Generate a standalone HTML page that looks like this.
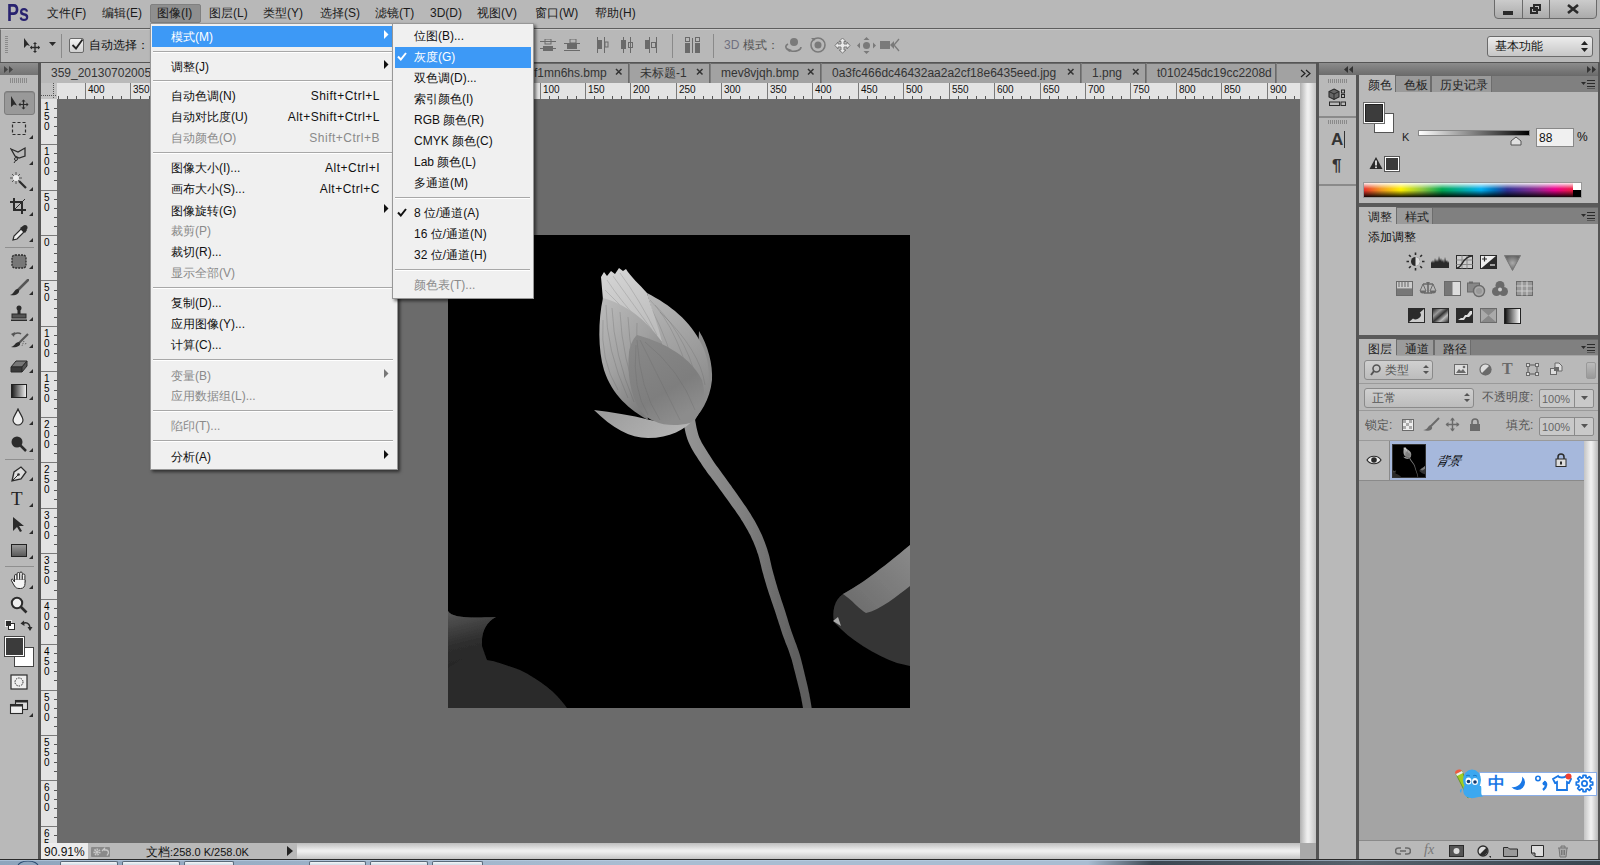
<!DOCTYPE html><html><head><meta charset="utf-8"><style>
*{margin:0;padding:0;box-sizing:border-box}
html,body{width:1600px;height:865px;overflow:hidden;background:#b9b9b9;font-family:"Liberation Sans",sans-serif;font-size:12px;color:#000}
div{position:absolute}
.t{position:absolute;white-space:nowrap;line-height:14px}
</style></head><body>
<div style="left:0px;top:0px;width:1600px;height:28px;background:#b8b8b8"></div>
<div style="left:0px;top:28px;width:1600px;height:1px;background:#5e5e5e"></div>
<div class="t" style="left:7px;top:1px;font-size:23px;font-weight:bold;color:#28226f;line-height:24px;transform:scaleX(0.78);transform-origin:0 0">Ps</div>
<div style="left:150px;top:4px;width:51px;height:19px;background:#8f8f8f;border-radius:2px;border:1px solid #808080"></div>
<div class="t" style="left:47px;top:6px;color:#1a1a1a">文件(F)</div>
<div class="t" style="left:102px;top:6px;color:#1a1a1a">编辑(E)</div>
<div class="t" style="left:157px;top:6px;color:#1a1a1a">图像(I)</div>
<div class="t" style="left:209px;top:6px;color:#1a1a1a">图层(L)</div>
<div class="t" style="left:263px;top:6px;color:#1a1a1a">类型(Y)</div>
<div class="t" style="left:320px;top:6px;color:#1a1a1a">选择(S)</div>
<div class="t" style="left:375px;top:6px;color:#1a1a1a">滤镜(T)</div>
<div class="t" style="left:430px;top:6px;color:#1a1a1a">3D(D)</div>
<div class="t" style="left:477px;top:6px;color:#1a1a1a">视图(V)</div>
<div class="t" style="left:535px;top:6px;color:#1a1a1a">窗口(W)</div>
<div class="t" style="left:595px;top:6px;color:#1a1a1a">帮助(H)</div>
<div style="left:1494px;top:-3px;width:103px;height:22px;background:linear-gradient(#cfcfcf,#ababab);border:1px solid #6a6a6a;border-radius:0 0 4px 4px"></div>
<div style="left:1522px;top:0px;width:1px;height:18px;background:#6a6a6a"></div>
<div style="left:1549px;top:0px;width:1px;height:18px;background:#6a6a6a"></div>
<div style="left:1503px;top:11px;width:10px;height:4px;background:#2a2a2a"></div>
<svg style="position:absolute;left:1530px;top:4px;" width="12" height="11" viewBox="0 0 12 11"><rect x="1" y="4" width="6" height="5" fill="none" stroke="#2a2a2a" stroke-width="2"/><rect x="4" y="1" width="6" height="5" fill="none" stroke="#2a2a2a" stroke-width="2"/></svg>
<svg style="position:absolute;left:1567px;top:4px;" width="12" height="10" viewBox="0 0 12 10"><path d="M1 1L11 9M11 1L1 9" stroke="#2a2a2a" stroke-width="2.6"/></svg>
<div style="left:0px;top:29px;width:1600px;height:33px;background:#b8b8b8;border-top:1px solid #cacaca;border-left:1px solid #707070;border-right:1px solid #707070"></div>
<div style="left:0px;top:62px;width:1600px;height:1px;background:#555"></div>
<div style="left:5px;top:36px;width:3px;height:1px;background:#8a8a8a"></div>
<div style="left:5px;top:38px;width:3px;height:1px;background:#8a8a8a"></div>
<div style="left:5px;top:40px;width:3px;height:1px;background:#8a8a8a"></div>
<div style="left:5px;top:42px;width:3px;height:1px;background:#8a8a8a"></div>
<div style="left:5px;top:44px;width:3px;height:1px;background:#8a8a8a"></div>
<div style="left:5px;top:46px;width:3px;height:1px;background:#8a8a8a"></div>
<div style="left:5px;top:48px;width:3px;height:1px;background:#8a8a8a"></div>
<div style="left:5px;top:50px;width:3px;height:1px;background:#8a8a8a"></div>
<div style="left:5px;top:52px;width:3px;height:1px;background:#8a8a8a"></div>
<svg style="position:absolute;left:23px;top:37px;" width="20" height="16" viewBox="0 0 20 16"><path d="M1 1L1 11L4 8L7 9Z" fill="#2a2a2a"/><path d="M12 6V15M7.5 10.5H16.5" stroke="#2a2a2a" stroke-width="1.3"/><path d="M10 7h4l-2-2zM10 14h4l-2 2zM9 8.5v4l-2-2zM15 8.5v4l2-2z" fill="#2a2a2a"/></svg>
<svg style="position:absolute;left:49px;top:42px;" width="8" height="5" viewBox="0 0 8 5"><path d="M0 0H7L3.5 4Z" fill="#2a2a2a"/></svg>
<div style="left:61px;top:34px;width:1px;height:24px;background:#8a8a8a"></div>
<div style="left:69px;top:38px;width:15px;height:15px;background:linear-gradient(#f4f4f4,#cfcfcf);border:1px solid #6a6a6a;border-radius:2px"></div>
<svg style="position:absolute;left:70px;top:38px;" width="14" height="13" viewBox="0 0 14 13"><path d="M2.5 7L6 10.5L12.5 1.5" fill="none" stroke="#222" stroke-width="1.8"/></svg>
<div class="t" style="left:89px;top:38px;color:#111">自动选择：</div>
<svg style="position:absolute;left:540px;top:39px;" width="17" height="12" viewBox="0 0 17 12"><rect x="0" y="2" width="16" height="1" fill="#6a6a6a"/><rect x="5" y="0" width="6" height="5" fill="none" stroke="#6a6a6a"/><rect x="0" y="9" width="16" height="1" fill="#6a6a6a"/><rect x="3" y="7" width="10" height="5" fill="#6a6a6a"/></svg>
<svg style="position:absolute;left:564px;top:39px;" width="17" height="12" viewBox="0 0 17 12"><rect x="6" y="0" width="6" height="4" fill="none" stroke="#6a6a6a"/><rect x="0" y="4" width="16" height="1" fill="#6a6a6a"/><rect x="3" y="5" width="10" height="5" fill="#6a6a6a"/><rect x="0" y="11" width="16" height="1" fill="#6a6a6a"/></svg>
<svg style="position:absolute;left:597px;top:37px;" width="13" height="16" viewBox="0 0 13 16"><rect x="0" y="0" width="1" height="16" fill="#6a6a6a"/><rect x="1" y="3" width="4" height="9" fill="#6a6a6a"/><rect x="7" y="0" width="1" height="16" fill="#6a6a6a"/><rect x="8" y="5" width="3" height="5" fill="none" stroke="#6a6a6a"/></svg>
<svg style="position:absolute;left:621px;top:37px;" width="13" height="16" viewBox="0 0 13 16"><rect x="2" y="0" width="1" height="16" fill="#6a6a6a"/><rect x="0" y="3" width="5" height="9" fill="#6a6a6a"/><rect x="9" y="0" width="1" height="16" fill="#6a6a6a"/><rect x="7.5" y="5.5" width="4" height="5" fill="none" stroke="#6a6a6a"/></svg>
<svg style="position:absolute;left:645px;top:37px;" width="13" height="16" viewBox="0 0 13 16"><rect x="0" y="3" width="4" height="9" fill="#6a6a6a"/><rect x="4" y="0" width="1" height="16" fill="#6a6a6a"/><rect x="6.5" y="5.5" width="4" height="5" fill="none" stroke="#6a6a6a"/><rect x="11" y="0" width="1" height="16" fill="#6a6a6a"/></svg>
<div style="left:672px;top:34px;width:1px;height:24px;background:#8a8a8a"></div>
<svg style="position:absolute;left:685px;top:37px;" width="16" height="16" viewBox="0 0 16 16"><rect x="0.5" y="0.5" width="4" height="4" fill="none" stroke="#6a6a6a"/><rect x="0" y="6" width="5" height="10" fill="#6a6a6a"/><rect x="7" y="1" width="1" height="15" fill="#6a6a6a"/><rect x="10.5" y="0.5" width="4" height="4" fill="none" stroke="#6a6a6a"/><rect x="10" y="6" width="5" height="10" fill="#6a6a6a"/></svg>
<div style="left:713px;top:34px;width:1px;height:24px;background:#8a8a8a"></div>
<div class="t" style="left:724px;top:38px;"><span style="color:#707080">3D</span> <span style="color:#555">模式：</span></div>
<svg style="position:absolute;left:784px;top:37px;" width="19" height="16" viewBox="0 0 19 16"><circle cx="10" cy="5" r="4" fill="#7a7a7a"/><path d="M4 7C0 9 2 13 7 14C12 15 17 13 17 10" fill="none" stroke="#7a7a7a" stroke-width="1.6"/><path d="M3 11l5 2-3 2z" fill="#7a7a7a"/></svg>
<svg style="position:absolute;left:809px;top:36px;" width="18" height="18" viewBox="0 0 18 18"><circle cx="9" cy="9" r="7" fill="none" stroke="#7a7a7a" stroke-width="1.6"/><circle cx="9" cy="9" r="3.5" fill="#7a7a7a"/><path d="M2 2l5 0-2 3z" fill="#7a7a7a"/></svg>
<svg style="position:absolute;left:834px;top:37px;" width="17" height="17" viewBox="0 0 17 17"><path d="M8.5 1L12 4.5H10V7H13V5L16 8.5L13 12V10H10V13H12L8.5 16L5 13H7V10H4V12L1 8.5L4 5V7H7V4.5H5Z" fill="#e8e8e8" stroke="#7a7a7a" stroke-width="1"/></svg>
<svg style="position:absolute;left:857px;top:37px;" width="19" height="17" viewBox="0 0 19 17"><circle cx="9.5" cy="8.5" r="3.5" fill="#7a7a7a"/><path d="M9.5 0l3 3h-6zM9.5 17l3-3h-6zM0 8.5l3-3v6zM19 8.5l-3-3v6z" fill="#7a7a7a"/></svg>
<svg style="position:absolute;left:880px;top:38px;" width="20" height="14" viewBox="0 0 20 14"><rect x="0" y="3" width="10" height="8" fill="#7a7a7a"/><path d="M10 7l4-4v8z" fill="#7a7a7a"/><path d="M19 1l-5 6 5 6" fill="none" stroke="#7a7a7a" stroke-width="1.3"/></svg>
<div style="left:1487px;top:36px;width:106px;height:21px;background:linear-gradient(#ececec,#c6c6c6);border:1px solid #6a6a6a;border-radius:3px"></div>
<div class="t" style="left:1495px;top:39px;color:#111">基本功能</div>
<svg style="position:absolute;left:1581px;top:41px;" width="7" height="11" viewBox="0 0 7 11"><path d="M0 4L3.5 0L7 4ZM0 7L3.5 11L7 7Z" fill="#222"/></svg>
<div style="left:0px;top:63px;width:38px;height:797px;background:#b9b9b9"></div>
<div style="left:0px;top:63px;width:38px;height:12px;background:linear-gradient(#8e8e8e,#737373)"></div>
<svg style="position:absolute;left:4px;top:66px;" width="10" height="7" viewBox="0 0 10 7"><path d="M0 0L4 3.5L0 7ZM5 0L9 3.5L5 7Z" fill="#444"/></svg>
<div style="left:10px;top:78px;width:1px;height:5px;background:#8a8a8a"></div>
<div style="left:12px;top:78px;width:1px;height:5px;background:#8a8a8a"></div>
<div style="left:14px;top:78px;width:1px;height:5px;background:#8a8a8a"></div>
<div style="left:16px;top:78px;width:1px;height:5px;background:#8a8a8a"></div>
<div style="left:18px;top:78px;width:1px;height:5px;background:#8a8a8a"></div>
<div style="left:20px;top:78px;width:1px;height:5px;background:#8a8a8a"></div>
<div style="left:22px;top:78px;width:1px;height:5px;background:#8a8a8a"></div>
<div style="left:24px;top:78px;width:1px;height:5px;background:#8a8a8a"></div>
<div style="left:26px;top:78px;width:1px;height:5px;background:#8a8a8a"></div>
<div style="left:38px;top:63px;width:3px;height:797px;background:#555"></div>
<div style="left:4px;top:91px;width:31px;height:24px;background:#999;border:1px solid #7c7c7c;border-radius:3px;box-shadow:inset 0 1px 0 #8a8a8a"></div>
<svg style="position:absolute;left:10px;top:95px;" width="20" height="16" viewBox="0 0 20 16"><path d="M1 1V12L4 9.5L7 10.5Z" fill="#2b2b2b"/><path d="M13.5 5V14M9 9.5H18" stroke="#2b2b2b" stroke-width="1.2"/><path d="M11.5 6.5h4l-2-2zM11.5 12.5h4l-2 2zM10.5 7.5v4l-2-2zM16.5 7.5v4l2-2z" fill="#2b2b2b"/></svg>
<svg style="position:absolute;left:11px;top:121px;" width="16" height="15" viewBox="0 0 16 15"><rect x="1.5" y="1.5" width="13" height="12" fill="none" stroke="#2b2b2b" stroke-width="1.2" stroke-dasharray="3 2"/></svg>
<svg style="position:absolute;left:29px;top:135px;" width="4" height="4" viewBox="0 0 4 4"><path d="M4 0V4H0Z" fill="#2b2b2b"/></svg>
<svg style="position:absolute;left:10px;top:146px;" width="18" height="18" viewBox="0 0 18 18"><path d="M1 3L8 6L15 2L15 10L9 12L5 10Z" fill="none" stroke="#2b2b2b" stroke-width="1.3"/><circle cx="6" cy="13" r="1.5" fill="none" stroke="#2b2b2b"/><path d="M6 14L4 17" stroke="#2b2b2b"/></svg>
<svg style="position:absolute;left:29px;top:161px;" width="4" height="4" viewBox="0 0 4 4"><path d="M4 0V4H0Z" fill="#2b2b2b"/></svg>
<svg style="position:absolute;left:9px;top:171px;" width="20" height="20" viewBox="0 0 20 20"><path d="M7 1V13M1 7H13M3 3L11 11M11 3L3 11" stroke="#555" stroke-width="1"/><circle cx="7" cy="7" r="3" fill="#eee"/><path d="M10 10L17 17" stroke="#2b2b2b" stroke-width="2.2"/></svg>
<svg style="position:absolute;left:29px;top:187px;" width="4" height="4" viewBox="0 0 4 4"><path d="M4 0V4H0Z" fill="#2b2b2b"/></svg>
<svg style="position:absolute;left:10px;top:198px;" width="17" height="17" viewBox="0 0 17 17"><path d="M4 0V12H16M0 4H12V16" fill="none" stroke="#2b2b2b" stroke-width="2"/><path d="M4 12L15 1" stroke="#2b2b2b" stroke-width="1"/></svg>
<svg style="position:absolute;left:29px;top:212px;" width="4" height="4" viewBox="0 0 4 4"><path d="M4 0V4H0Z" fill="#2b2b2b"/></svg>
<svg style="position:absolute;left:11px;top:224px;" width="17" height="18" viewBox="0 0 17 18"><path d="M2 16L3 12L10 5L13 8L6 15Z" fill="#eee" stroke="#2b2b2b" stroke-width="1.2"/><path d="M9 4L14 9L16 6L12 2Z" fill="#2b2b2b"/><circle cx="14" cy="3.5" r="2.5" fill="#2b2b2b"/></svg>
<svg style="position:absolute;left:29px;top:238px;" width="4" height="4" viewBox="0 0 4 4"><path d="M4 0V4H0Z" fill="#2b2b2b"/></svg>
<div style="left:5px;top:247px;width:29px;height:1px;background:#8f8f8f"></div>
<svg style="position:absolute;left:10px;top:253px;" width="18" height="17" viewBox="0 0 18 17"><rect x="2" y="2" width="14" height="13" rx="3" fill="#777" stroke="#2b2b2b" stroke-width="1.3" stroke-dasharray="2 1"/></svg>
<svg style="position:absolute;left:29px;top:265px;" width="4" height="4" viewBox="0 0 4 4"><path d="M4 0V4H0Z" fill="#2b2b2b"/></svg>
<svg style="position:absolute;left:9px;top:279px;" width="20" height="18" viewBox="0 0 20 18"><path d="M19 1L9 11" stroke="#555" stroke-width="2.5" stroke-linecap="round"/><path d="M9 10C5 10 5 15 1 16C6 17 11 15 10 11Z" fill="#2b2b2b"/></svg>
<svg style="position:absolute;left:29px;top:291px;" width="4" height="4" viewBox="0 0 4 4"><path d="M4 0V4H0Z" fill="#2b2b2b"/></svg>
<svg style="position:absolute;left:10px;top:305px;" width="18" height="17" viewBox="0 0 18 17"><circle cx="9" cy="3" r="2.5" fill="#2b2b2b"/><rect x="7.5" y="4" width="3" height="5" fill="#2b2b2b"/><rect x="2" y="9" width="14" height="4" fill="#555" stroke="#2b2b2b" stroke-width="1"/><rect x="1" y="14.5" width="16" height="1.5" fill="#2b2b2b"/></svg>
<svg style="position:absolute;left:29px;top:317px;" width="4" height="4" viewBox="0 0 4 4"><path d="M4 0V4H0Z" fill="#2b2b2b"/></svg>
<svg style="position:absolute;left:9px;top:331px;" width="20" height="18" viewBox="0 0 20 18"><path d="M4 4C7 1 11 2 12 3" fill="none" stroke="#555" stroke-width="1.5"/><path d="M2 3L6 1L5 6Z" fill="#555"/><path d="M19 3L10 12" stroke="#555" stroke-width="2.2"/><path d="M10 11C6 11 6 15 2 16C7 17 12 15 11 12Z" fill="#2b2b2b"/><path d="M15 10L13 15M17 12L16 14" stroke="#555" stroke-dasharray="1 1"/></svg>
<svg style="position:absolute;left:29px;top:344px;" width="4" height="4" viewBox="0 0 4 4"><path d="M4 0V4H0Z" fill="#2b2b2b"/></svg>
<svg style="position:absolute;left:10px;top:357px;" width="18" height="16" viewBox="0 0 18 16"><path d="M1 10L6 4H17L12 10Z" fill="#777" stroke="#2b2b2b"/><path d="M1 10H12V15H1Z" fill="#3a3a3a" stroke="#2b2b2b"/><path d="M12 10L17 4V9L12 15Z" fill="#555" stroke="#2b2b2b"/></svg>
<svg style="position:absolute;left:29px;top:369px;" width="4" height="4" viewBox="0 0 4 4"><path d="M4 0V4H0Z" fill="#2b2b2b"/></svg>
<div style="left:11px;top:384px;width:16px;height:14px;background:linear-gradient(90deg,#1e1e1e,#eeeeee);border:1px solid #222"></div>
<svg style="position:absolute;left:29px;top:396px;" width="4" height="4" viewBox="0 0 4 4"><path d="M4 0V4H0Z" fill="#2b2b2b"/></svg>
<svg style="position:absolute;left:11px;top:408px;" width="14" height="18" viewBox="0 0 14 18"><path d="M7 1C5 6 2 9 2 12C2 15 4.5 17 7 17C9.5 17 12 15 12 12C12 9 9 6 7 1Z" fill="#eee" stroke="#2b2b2b" stroke-width="1.2"/></svg>
<svg style="position:absolute;left:29px;top:421px;" width="4" height="4" viewBox="0 0 4 4"><path d="M4 0V4H0Z" fill="#2b2b2b"/></svg>
<svg style="position:absolute;left:10px;top:435px;" width="18" height="18" viewBox="0 0 18 18"><circle cx="7" cy="7" r="5.5" fill="#2b2b2b"/><path d="M10 10L16 16" stroke="#2b2b2b" stroke-width="2.5"/></svg>
<svg style="position:absolute;left:29px;top:448px;" width="4" height="4" viewBox="0 0 4 4"><path d="M4 0V4H0Z" fill="#2b2b2b"/></svg>
<div style="left:5px;top:459px;width:29px;height:1px;background:#8f8f8f"></div>
<svg style="position:absolute;left:10px;top:465px;" width="18" height="17" viewBox="0 0 18 17"><path d="M2 16L4 7L11 2L16 7L11 14Z" fill="#ddd" stroke="#2b2b2b" stroke-width="1.3"/><path d="M2 16L8 10" stroke="#2b2b2b"/><circle cx="8.5" cy="9.5" r="1.3" fill="#2b2b2b"/></svg>
<svg style="position:absolute;left:29px;top:477px;" width="4" height="4" viewBox="0 0 4 4"><path d="M4 0V4H0Z" fill="#2b2b2b"/></svg>
<div class="t" style="left:11px;top:489px;font-family:'Liberation Serif',serif;font-size:19px;line-height:19px;color:#222">T</div>
<svg style="position:absolute;left:29px;top:503px;" width="4" height="4" viewBox="0 0 4 4"><path d="M4 0V4H0Z" fill="#2b2b2b"/></svg>
<svg style="position:absolute;left:12px;top:516px;" width="14" height="17" viewBox="0 0 14 17"><path d="M1 1V15L5 11L8 16L10 15L7 10L12 10Z" fill="#2b2b2b"/></svg>
<svg style="position:absolute;left:29px;top:530px;" width="4" height="4" viewBox="0 0 4 4"><path d="M4 0V4H0Z" fill="#2b2b2b"/></svg>
<div style="left:11px;top:544px;width:16px;height:13px;background:linear-gradient(#9a9a9a,#5a5a5a);border:1px solid #222"></div>
<svg style="position:absolute;left:29px;top:555px;" width="4" height="4" viewBox="0 0 4 4"><path d="M4 0V4H0Z" fill="#2b2b2b"/></svg>
<div style="left:5px;top:566px;width:29px;height:1px;background:#8f8f8f"></div>
<svg style="position:absolute;left:10px;top:571px;" width="19" height="18" viewBox="0 0 19 18"><g fill="#f4f4f4" stroke="#2b2b2b" stroke-width="1"><rect x="4.5" y="3.5" width="2.6" height="9" rx="1.3"/><rect x="7.1" y="1.5" width="2.6" height="10" rx="1.3"/><rect x="9.7" y="1" width="2.6" height="10" rx="1.3"/><rect x="12.3" y="3" width="2.6" height="9" rx="1.3"/><path d="M3 8.5C2 7.5 0.8 8.5 1.5 9.8L4.5 15C5.5 16.6 7 17.5 9 17.5H10.5C13.5 17.5 15 15.5 15 12.5V9H4.5V11Z"/></g><path d="M5 9.5H14.5" stroke="#f4f4f4" stroke-width="1.5"/></svg>
<svg style="position:absolute;left:29px;top:585px;" width="4" height="4" viewBox="0 0 4 4"><path d="M4 0V4H0Z" fill="#2b2b2b"/></svg>
<svg style="position:absolute;left:10px;top:596px;" width="18" height="18" viewBox="0 0 18 18"><circle cx="7" cy="7" r="5.2" fill="#eee" stroke="#2b2b2b" stroke-width="2"/><path d="M11 11L16.5 16.5" stroke="#2b2b2b" stroke-width="2.6"/></svg>
<svg style="position:absolute;left:5px;top:620px;" width="10" height="11" viewBox="0 0 10 11"><rect x="0.5" y="0.5" width="6" height="6" fill="#2b2b2b" stroke="#fff" stroke-width="0.8"/><rect x="3.5" y="3.5" width="6" height="6" fill="#fff" stroke="#2b2b2b"/><rect x="1" y="1" width="5" height="5" fill="#2b2b2b"/></svg>
<svg style="position:absolute;left:20px;top:619px;" width="13" height="13" viewBox="0 0 13 13"><path d="M3 4.5C6 3 9 4 10 8" fill="none" stroke="#2b2b2b" stroke-width="1.4"/><path d="M0.5 4.5L4 1.5L4.5 7Z" fill="#2b2b2b"/><path d="M7.5 8H12.5L10 12Z" fill="#2b2b2b"/></svg>
<div style="left:14px;top:647px;width:20px;height:20px;background:#fff;border:1px solid #444"></div>
<div style="left:5px;top:637px;width:19px;height:19px;background:#3b3b3b;border:1px solid #fff;outline:1px solid #444"></div>
<svg style="position:absolute;left:10px;top:674px;" width="18" height="16" viewBox="0 0 18 16"><rect x="1" y="1" width="16" height="14" fill="#eee" stroke="#2b2b2b" stroke-width="1.2"/><circle cx="9" cy="8" r="4" fill="none" stroke="#2b2b2b" stroke-dasharray="1.5 1"/></svg>
<svg style="position:absolute;left:9px;top:699px;" width="20" height="18" viewBox="0 0 20 18"><rect x="6.5" y="1.5" width="12" height="9" fill="#ddd" stroke="#2b2b2b" stroke-width="1.1"/><rect x="6.5" y="1.5" width="12" height="2" fill="#2b2b2b"/><rect x="1.5" y="5.5" width="12" height="9" fill="#eee" stroke="#2b2b2b" stroke-width="1.1"/><rect x="1.5" y="5.5" width="12" height="2" fill="#2b2b2b"/></svg>
<svg style="position:absolute;left:29px;top:713px;" width="4" height="4" viewBox="0 0 4 4"><path d="M4 0V4H0Z" fill="#2b2b2b"/></svg>
<div style="left:41px;top:63px;width:1275px;height:20px;background:#7e7e7e"></div>
<div style="left:41px;top:63px;width:110px;height:20px;background:#b9b9b9"></div>
<div class="t" style="left:51px;top:66px;font-size:12px;color:#333">359_20130702005</div>
<div style="left:530px;top:63px;width:99px;height:20px;background:#a2a2a2;border-right:1px solid #6a6a6a;border-top:1px solid #6a6a6a"></div>
<div class="t" style="left:534px;top:66px;color:#333">f1mn6hs.bmp</div>
<svg style="position:absolute;left:615px;top:68px;" width="8" height="8" viewBox="0 0 8 8"><path d="M1 1L6.5 6.5M6.5 1L1 6.5" stroke="#333" stroke-width="1.5"/></svg>
<div style="left:630px;top:63px;width:80px;height:20px;background:#a2a2a2;border-right:1px solid #6a6a6a;border-top:1px solid #6a6a6a"></div>
<div class="t" style="left:640px;top:66px;color:#333">未标题-1</div>
<svg style="position:absolute;left:696px;top:68px;" width="8" height="8" viewBox="0 0 8 8"><path d="M1 1L6.5 6.5M6.5 1L1 6.5" stroke="#333" stroke-width="1.5"/></svg>
<div style="left:711px;top:63px;width:110px;height:20px;background:#a2a2a2;border-right:1px solid #6a6a6a;border-top:1px solid #6a6a6a"></div>
<div class="t" style="left:721px;top:66px;color:#333">mev8vjqh.bmp</div>
<svg style="position:absolute;left:807px;top:68px;" width="8" height="8" viewBox="0 0 8 8"><path d="M1 1L6.5 6.5M6.5 1L1 6.5" stroke="#333" stroke-width="1.5"/></svg>
<div style="left:822px;top:63px;width:259px;height:20px;background:#a2a2a2;border-right:1px solid #6a6a6a;border-top:1px solid #6a6a6a"></div>
<div class="t" style="left:832px;top:66px;color:#333">0a3fc466dc46432aa2a2cf18e6435eed.jpg</div>
<svg style="position:absolute;left:1067px;top:68px;" width="8" height="8" viewBox="0 0 8 8"><path d="M1 1L6.5 6.5M6.5 1L1 6.5" stroke="#333" stroke-width="1.5"/></svg>
<div style="left:1082px;top:63px;width:64px;height:20px;background:#a2a2a2;border-right:1px solid #6a6a6a;border-top:1px solid #6a6a6a"></div>
<div class="t" style="left:1092px;top:66px;color:#333">1.png</div>
<svg style="position:absolute;left:1132px;top:68px;" width="8" height="8" viewBox="0 0 8 8"><path d="M1 1L6.5 6.5M6.5 1L1 6.5" stroke="#333" stroke-width="1.5"/></svg>
<div style="left:1147px;top:63px;width:129px;height:20px;background:#a2a2a2;border-right:1px solid #6a6a6a;border-top:1px solid #6a6a6a"></div>
<div style="left:1147px;top:63px;width:129px;height:20px;overflow:hidden"><div class="t" style="left:10px;top:3px;color:#333">t010245dc19cc2208d</div></div>
<div style="left:1277px;top:63px;width:39px;height:20px;background:#a2a2a2;border-top:1px solid #6a6a6a"></div>
<svg style="position:absolute;left:1300px;top:69px;" width="12" height="9" viewBox="0 0 12 9"><path d="M1 1L5 4.5L1 8M6 1L10 4.5L6 8" fill="none" stroke="#222" stroke-width="1.2"/></svg>
<div style="left:41px;top:83px;width:1259px;height:16px;background:#e3e3e3"></div>
<div style="left:41px;top:99px;width:16px;height:744px;background:#e3e3e3"></div>
<div style="left:41px;top:83px;width:16px;height:16px;background:#c3c3c3"></div>
<svg style="position:absolute;left:41px;top:83px;" width="16" height="16" viewBox="0 0 16 16"><path d="M12.5 0V15M0 12.5H15" stroke="#555" stroke-dasharray="1 1"/></svg>
<svg style="position:absolute;left:57px;top:83px;" width="1243" height="16" viewBox="0 0 1243 16"><rect x="1" y="13" width="1" height="3" fill="#555"/><rect x="10" y="13" width="1" height="3" fill="#555"/><rect x="19" y="13" width="1" height="3" fill="#555"/><rect x="28" y="0" width="1" height="16" fill="#7a7a7a"/><rect x="37" y="13" width="1" height="3" fill="#555"/><rect x="46" y="13" width="1" height="3" fill="#555"/><rect x="55" y="13" width="1" height="3" fill="#555"/><rect x="64" y="13" width="1" height="3" fill="#555"/><rect x="73" y="0" width="1" height="16" fill="#7a7a7a"/><rect x="83" y="13" width="1" height="3" fill="#555"/><rect x="92" y="13" width="1" height="3" fill="#555"/><rect x="101" y="13" width="1" height="3" fill="#555"/><rect x="110" y="13" width="1" height="3" fill="#555"/><rect x="119" y="0" width="1" height="16" fill="#7a7a7a"/><rect x="128" y="13" width="1" height="3" fill="#555"/><rect x="137" y="13" width="1" height="3" fill="#555"/><rect x="146" y="13" width="1" height="3" fill="#555"/><rect x="155" y="13" width="1" height="3" fill="#555"/><rect x="164" y="0" width="1" height="16" fill="#7a7a7a"/><rect x="173" y="13" width="1" height="3" fill="#555"/><rect x="183" y="13" width="1" height="3" fill="#555"/><rect x="192" y="13" width="1" height="3" fill="#555"/><rect x="201" y="13" width="1" height="3" fill="#555"/><rect x="210" y="0" width="1" height="16" fill="#7a7a7a"/><rect x="219" y="13" width="1" height="3" fill="#555"/><rect x="228" y="13" width="1" height="3" fill="#555"/><rect x="237" y="13" width="1" height="3" fill="#555"/><rect x="246" y="13" width="1" height="3" fill="#555"/><rect x="255" y="0" width="1" height="16" fill="#7a7a7a"/><rect x="264" y="13" width="1" height="3" fill="#555"/><rect x="273" y="13" width="1" height="3" fill="#555"/><rect x="283" y="13" width="1" height="3" fill="#555"/><rect x="292" y="13" width="1" height="3" fill="#555"/><rect x="301" y="0" width="1" height="16" fill="#7a7a7a"/><rect x="310" y="13" width="1" height="3" fill="#555"/><rect x="319" y="13" width="1" height="3" fill="#555"/><rect x="328" y="13" width="1" height="3" fill="#555"/><rect x="337" y="13" width="1" height="3" fill="#555"/><rect x="346" y="0" width="1" height="16" fill="#7a7a7a"/><rect x="355" y="13" width="1" height="3" fill="#555"/><rect x="364" y="13" width="1" height="3" fill="#555"/><rect x="373" y="13" width="1" height="3" fill="#555"/><rect x="383" y="13" width="1" height="3" fill="#555"/><rect x="392" y="0" width="1" height="16" fill="#7a7a7a"/><rect x="401" y="13" width="1" height="3" fill="#555"/><rect x="410" y="13" width="1" height="3" fill="#555"/><rect x="419" y="13" width="1" height="3" fill="#555"/><rect x="428" y="13" width="1" height="3" fill="#555"/><rect x="437" y="0" width="1" height="16" fill="#7a7a7a"/><rect x="446" y="13" width="1" height="3" fill="#555"/><rect x="455" y="13" width="1" height="3" fill="#555"/><rect x="464" y="13" width="1" height="3" fill="#555"/><rect x="473" y="13" width="1" height="3" fill="#555"/><rect x="483" y="0" width="1" height="16" fill="#7a7a7a"/><rect x="492" y="13" width="1" height="3" fill="#555"/><rect x="501" y="13" width="1" height="3" fill="#555"/><rect x="510" y="13" width="1" height="3" fill="#555"/><rect x="519" y="13" width="1" height="3" fill="#555"/><rect x="528" y="0" width="1" height="16" fill="#7a7a7a"/><rect x="537" y="13" width="1" height="3" fill="#555"/><rect x="546" y="13" width="1" height="3" fill="#555"/><rect x="555" y="13" width="1" height="3" fill="#555"/><rect x="564" y="13" width="1" height="3" fill="#555"/><rect x="573" y="0" width="1" height="16" fill="#7a7a7a"/><rect x="583" y="13" width="1" height="3" fill="#555"/><rect x="592" y="13" width="1" height="3" fill="#555"/><rect x="601" y="13" width="1" height="3" fill="#555"/><rect x="610" y="13" width="1" height="3" fill="#555"/><rect x="619" y="0" width="1" height="16" fill="#7a7a7a"/><rect x="628" y="13" width="1" height="3" fill="#555"/><rect x="637" y="13" width="1" height="3" fill="#555"/><rect x="646" y="13" width="1" height="3" fill="#555"/><rect x="655" y="13" width="1" height="3" fill="#555"/><rect x="664" y="0" width="1" height="16" fill="#7a7a7a"/><rect x="673" y="13" width="1" height="3" fill="#555"/><rect x="683" y="13" width="1" height="3" fill="#555"/><rect x="692" y="13" width="1" height="3" fill="#555"/><rect x="701" y="13" width="1" height="3" fill="#555"/><rect x="710" y="0" width="1" height="16" fill="#7a7a7a"/><rect x="719" y="13" width="1" height="3" fill="#555"/><rect x="728" y="13" width="1" height="3" fill="#555"/><rect x="737" y="13" width="1" height="3" fill="#555"/><rect x="746" y="13" width="1" height="3" fill="#555"/><rect x="755" y="0" width="1" height="16" fill="#7a7a7a"/><rect x="764" y="13" width="1" height="3" fill="#555"/><rect x="773" y="13" width="1" height="3" fill="#555"/><rect x="783" y="13" width="1" height="3" fill="#555"/><rect x="792" y="13" width="1" height="3" fill="#555"/><rect x="801" y="0" width="1" height="16" fill="#7a7a7a"/><rect x="810" y="13" width="1" height="3" fill="#555"/><rect x="819" y="13" width="1" height="3" fill="#555"/><rect x="828" y="13" width="1" height="3" fill="#555"/><rect x="837" y="13" width="1" height="3" fill="#555"/><rect x="846" y="0" width="1" height="16" fill="#7a7a7a"/><rect x="855" y="13" width="1" height="3" fill="#555"/><rect x="864" y="13" width="1" height="3" fill="#555"/><rect x="873" y="13" width="1" height="3" fill="#555"/><rect x="883" y="13" width="1" height="3" fill="#555"/><rect x="892" y="0" width="1" height="16" fill="#7a7a7a"/><rect x="901" y="13" width="1" height="3" fill="#555"/><rect x="910" y="13" width="1" height="3" fill="#555"/><rect x="919" y="13" width="1" height="3" fill="#555"/><rect x="928" y="13" width="1" height="3" fill="#555"/><rect x="937" y="0" width="1" height="16" fill="#7a7a7a"/><rect x="946" y="13" width="1" height="3" fill="#555"/><rect x="955" y="13" width="1" height="3" fill="#555"/><rect x="964" y="13" width="1" height="3" fill="#555"/><rect x="973" y="13" width="1" height="3" fill="#555"/><rect x="983" y="0" width="1" height="16" fill="#7a7a7a"/><rect x="992" y="13" width="1" height="3" fill="#555"/><rect x="1001" y="13" width="1" height="3" fill="#555"/><rect x="1010" y="13" width="1" height="3" fill="#555"/><rect x="1019" y="13" width="1" height="3" fill="#555"/><rect x="1028" y="0" width="1" height="16" fill="#7a7a7a"/><rect x="1037" y="13" width="1" height="3" fill="#555"/><rect x="1046" y="13" width="1" height="3" fill="#555"/><rect x="1055" y="13" width="1" height="3" fill="#555"/><rect x="1064" y="13" width="1" height="3" fill="#555"/><rect x="1073" y="0" width="1" height="16" fill="#7a7a7a"/><rect x="1083" y="13" width="1" height="3" fill="#555"/><rect x="1092" y="13" width="1" height="3" fill="#555"/><rect x="1101" y="13" width="1" height="3" fill="#555"/><rect x="1110" y="13" width="1" height="3" fill="#555"/><rect x="1119" y="0" width="1" height="16" fill="#7a7a7a"/><rect x="1128" y="13" width="1" height="3" fill="#555"/><rect x="1137" y="13" width="1" height="3" fill="#555"/><rect x="1146" y="13" width="1" height="3" fill="#555"/><rect x="1155" y="13" width="1" height="3" fill="#555"/><rect x="1164" y="0" width="1" height="16" fill="#7a7a7a"/><rect x="1173" y="13" width="1" height="3" fill="#555"/><rect x="1183" y="13" width="1" height="3" fill="#555"/><rect x="1192" y="13" width="1" height="3" fill="#555"/><rect x="1201" y="13" width="1" height="3" fill="#555"/><rect x="1210" y="0" width="1" height="16" fill="#7a7a7a"/><rect x="1219" y="13" width="1" height="3" fill="#555"/><rect x="1228" y="13" width="1" height="3" fill="#555"/><rect x="1237" y="13" width="1" height="3" fill="#555"/></svg>
<div class="t" style="left:88px;top:85px;font-size:10px;line-height:10px;color:#111">400</div>
<div class="t" style="left:133px;top:85px;font-size:10px;line-height:10px;color:#111">350</div>
<div class="t" style="left:179px;top:85px;font-size:10px;line-height:10px;color:#111">300</div>
<div class="t" style="left:224px;top:85px;font-size:10px;line-height:10px;color:#111">250</div>
<div class="t" style="left:270px;top:85px;font-size:10px;line-height:10px;color:#111">200</div>
<div class="t" style="left:315px;top:85px;font-size:10px;line-height:10px;color:#111">150</div>
<div class="t" style="left:361px;top:85px;font-size:10px;line-height:10px;color:#111">100</div>
<div class="t" style="left:406px;top:85px;font-size:10px;line-height:10px;color:#111">50</div>
<div class="t" style="left:452px;top:85px;font-size:10px;line-height:10px;color:#111">0</div>
<div class="t" style="left:497px;top:85px;font-size:10px;line-height:10px;color:#111">50</div>
<div class="t" style="left:543px;top:85px;font-size:10px;line-height:10px;color:#111">100</div>
<div class="t" style="left:588px;top:85px;font-size:10px;line-height:10px;color:#111">150</div>
<div class="t" style="left:633px;top:85px;font-size:10px;line-height:10px;color:#111">200</div>
<div class="t" style="left:679px;top:85px;font-size:10px;line-height:10px;color:#111">250</div>
<div class="t" style="left:724px;top:85px;font-size:10px;line-height:10px;color:#111">300</div>
<div class="t" style="left:770px;top:85px;font-size:10px;line-height:10px;color:#111">350</div>
<div class="t" style="left:815px;top:85px;font-size:10px;line-height:10px;color:#111">400</div>
<div class="t" style="left:861px;top:85px;font-size:10px;line-height:10px;color:#111">450</div>
<div class="t" style="left:906px;top:85px;font-size:10px;line-height:10px;color:#111">500</div>
<div class="t" style="left:952px;top:85px;font-size:10px;line-height:10px;color:#111">550</div>
<div class="t" style="left:997px;top:85px;font-size:10px;line-height:10px;color:#111">600</div>
<div class="t" style="left:1043px;top:85px;font-size:10px;line-height:10px;color:#111">650</div>
<div class="t" style="left:1088px;top:85px;font-size:10px;line-height:10px;color:#111">700</div>
<div class="t" style="left:1133px;top:85px;font-size:10px;line-height:10px;color:#111">750</div>
<div class="t" style="left:1179px;top:85px;font-size:10px;line-height:10px;color:#111">800</div>
<div class="t" style="left:1224px;top:85px;font-size:10px;line-height:10px;color:#111">850</div>
<div class="t" style="left:1270px;top:85px;font-size:10px;line-height:10px;color:#111">900</div>
<svg style="position:absolute;left:41px;top:99px;" width="16" height="744" viewBox="0 0 16 744"><rect x="13" y="9" width="3" height="1" fill="#555"/><rect x="13" y="18" width="3" height="1" fill="#555"/><rect x="13" y="27" width="3" height="1" fill="#555"/><rect x="13" y="36" width="3" height="1" fill="#555"/><rect x="0" y="45" width="16" height="1" fill="#7a7a7a"/><rect x="13" y="54" width="3" height="1" fill="#555"/><rect x="13" y="63" width="3" height="1" fill="#555"/><rect x="13" y="72" width="3" height="1" fill="#555"/><rect x="13" y="81" width="3" height="1" fill="#555"/><rect x="0" y="91" width="16" height="1" fill="#7a7a7a"/><rect x="13" y="100" width="3" height="1" fill="#555"/><rect x="13" y="109" width="3" height="1" fill="#555"/><rect x="13" y="118" width="3" height="1" fill="#555"/><rect x="13" y="127" width="3" height="1" fill="#555"/><rect x="0" y="136" width="16" height="1" fill="#7a7a7a"/><rect x="13" y="145" width="3" height="1" fill="#555"/><rect x="13" y="154" width="3" height="1" fill="#555"/><rect x="13" y="163" width="3" height="1" fill="#555"/><rect x="13" y="172" width="3" height="1" fill="#555"/><rect x="0" y="181" width="16" height="1" fill="#7a7a7a"/><rect x="13" y="191" width="3" height="1" fill="#555"/><rect x="13" y="200" width="3" height="1" fill="#555"/><rect x="13" y="209" width="3" height="1" fill="#555"/><rect x="13" y="218" width="3" height="1" fill="#555"/><rect x="0" y="227" width="16" height="1" fill="#7a7a7a"/><rect x="13" y="236" width="3" height="1" fill="#555"/><rect x="13" y="245" width="3" height="1" fill="#555"/><rect x="13" y="254" width="3" height="1" fill="#555"/><rect x="13" y="263" width="3" height="1" fill="#555"/><rect x="0" y="272" width="16" height="1" fill="#7a7a7a"/><rect x="13" y="281" width="3" height="1" fill="#555"/><rect x="13" y="291" width="3" height="1" fill="#555"/><rect x="13" y="300" width="3" height="1" fill="#555"/><rect x="13" y="309" width="3" height="1" fill="#555"/><rect x="0" y="318" width="16" height="1" fill="#7a7a7a"/><rect x="13" y="327" width="3" height="1" fill="#555"/><rect x="13" y="336" width="3" height="1" fill="#555"/><rect x="13" y="345" width="3" height="1" fill="#555"/><rect x="13" y="354" width="3" height="1" fill="#555"/><rect x="0" y="363" width="16" height="1" fill="#7a7a7a"/><rect x="13" y="372" width="3" height="1" fill="#555"/><rect x="13" y="381" width="3" height="1" fill="#555"/><rect x="13" y="391" width="3" height="1" fill="#555"/><rect x="13" y="400" width="3" height="1" fill="#555"/><rect x="0" y="409" width="16" height="1" fill="#7a7a7a"/><rect x="13" y="418" width="3" height="1" fill="#555"/><rect x="13" y="427" width="3" height="1" fill="#555"/><rect x="13" y="436" width="3" height="1" fill="#555"/><rect x="13" y="445" width="3" height="1" fill="#555"/><rect x="0" y="454" width="16" height="1" fill="#7a7a7a"/><rect x="13" y="463" width="3" height="1" fill="#555"/><rect x="13" y="472" width="3" height="1" fill="#555"/><rect x="13" y="481" width="3" height="1" fill="#555"/><rect x="13" y="491" width="3" height="1" fill="#555"/><rect x="0" y="500" width="16" height="1" fill="#7a7a7a"/><rect x="13" y="509" width="3" height="1" fill="#555"/><rect x="13" y="518" width="3" height="1" fill="#555"/><rect x="13" y="527" width="3" height="1" fill="#555"/><rect x="13" y="536" width="3" height="1" fill="#555"/><rect x="0" y="545" width="16" height="1" fill="#7a7a7a"/><rect x="13" y="554" width="3" height="1" fill="#555"/><rect x="13" y="563" width="3" height="1" fill="#555"/><rect x="13" y="572" width="3" height="1" fill="#555"/><rect x="13" y="581" width="3" height="1" fill="#555"/><rect x="0" y="591" width="16" height="1" fill="#7a7a7a"/><rect x="13" y="600" width="3" height="1" fill="#555"/><rect x="13" y="609" width="3" height="1" fill="#555"/><rect x="13" y="618" width="3" height="1" fill="#555"/><rect x="13" y="627" width="3" height="1" fill="#555"/><rect x="0" y="636" width="16" height="1" fill="#7a7a7a"/><rect x="13" y="645" width="3" height="1" fill="#555"/><rect x="13" y="654" width="3" height="1" fill="#555"/><rect x="13" y="663" width="3" height="1" fill="#555"/><rect x="13" y="672" width="3" height="1" fill="#555"/><rect x="0" y="681" width="16" height="1" fill="#7a7a7a"/><rect x="13" y="691" width="3" height="1" fill="#555"/><rect x="13" y="700" width="3" height="1" fill="#555"/><rect x="13" y="709" width="3" height="1" fill="#555"/><rect x="13" y="718" width="3" height="1" fill="#555"/><rect x="0" y="727" width="16" height="1" fill="#7a7a7a"/><rect x="13" y="736" width="3" height="1" fill="#555"/></svg>
<div style="left:44px;top:102px;width:8px;height:30px"><div class="t" style="left:0;top:0px;font-size:10px;line-height:10px">1</div><div class="t" style="left:0;top:10px;font-size:10px;line-height:10px">5</div><div class="t" style="left:0;top:20px;font-size:10px;line-height:10px">0</div></div>
<div style="left:44px;top:147px;width:8px;height:30px"><div class="t" style="left:0;top:0px;font-size:10px;line-height:10px">1</div><div class="t" style="left:0;top:10px;font-size:10px;line-height:10px">0</div><div class="t" style="left:0;top:20px;font-size:10px;line-height:10px">0</div></div>
<div style="left:44px;top:193px;width:8px;height:30px"><div class="t" style="left:0;top:0px;font-size:10px;line-height:10px">5</div><div class="t" style="left:0;top:10px;font-size:10px;line-height:10px">0</div></div>
<div style="left:44px;top:238px;width:8px;height:30px"><div class="t" style="left:0;top:0px;font-size:10px;line-height:10px">0</div></div>
<div style="left:44px;top:283px;width:8px;height:30px"><div class="t" style="left:0;top:0px;font-size:10px;line-height:10px">5</div><div class="t" style="left:0;top:10px;font-size:10px;line-height:10px">0</div></div>
<div style="left:44px;top:329px;width:8px;height:30px"><div class="t" style="left:0;top:0px;font-size:10px;line-height:10px">1</div><div class="t" style="left:0;top:10px;font-size:10px;line-height:10px">0</div><div class="t" style="left:0;top:20px;font-size:10px;line-height:10px">0</div></div>
<div style="left:44px;top:374px;width:8px;height:30px"><div class="t" style="left:0;top:0px;font-size:10px;line-height:10px">1</div><div class="t" style="left:0;top:10px;font-size:10px;line-height:10px">5</div><div class="t" style="left:0;top:20px;font-size:10px;line-height:10px">0</div></div>
<div style="left:44px;top:420px;width:8px;height:30px"><div class="t" style="left:0;top:0px;font-size:10px;line-height:10px">2</div><div class="t" style="left:0;top:10px;font-size:10px;line-height:10px">0</div><div class="t" style="left:0;top:20px;font-size:10px;line-height:10px">0</div></div>
<div style="left:44px;top:465px;width:8px;height:30px"><div class="t" style="left:0;top:0px;font-size:10px;line-height:10px">2</div><div class="t" style="left:0;top:10px;font-size:10px;line-height:10px">5</div><div class="t" style="left:0;top:20px;font-size:10px;line-height:10px">0</div></div>
<div style="left:44px;top:511px;width:8px;height:30px"><div class="t" style="left:0;top:0px;font-size:10px;line-height:10px">3</div><div class="t" style="left:0;top:10px;font-size:10px;line-height:10px">0</div><div class="t" style="left:0;top:20px;font-size:10px;line-height:10px">0</div></div>
<div style="left:44px;top:556px;width:8px;height:30px"><div class="t" style="left:0;top:0px;font-size:10px;line-height:10px">3</div><div class="t" style="left:0;top:10px;font-size:10px;line-height:10px">5</div><div class="t" style="left:0;top:20px;font-size:10px;line-height:10px">0</div></div>
<div style="left:44px;top:602px;width:8px;height:30px"><div class="t" style="left:0;top:0px;font-size:10px;line-height:10px">4</div><div class="t" style="left:0;top:10px;font-size:10px;line-height:10px">0</div><div class="t" style="left:0;top:20px;font-size:10px;line-height:10px">0</div></div>
<div style="left:44px;top:647px;width:8px;height:30px"><div class="t" style="left:0;top:0px;font-size:10px;line-height:10px">4</div><div class="t" style="left:0;top:10px;font-size:10px;line-height:10px">5</div><div class="t" style="left:0;top:20px;font-size:10px;line-height:10px">0</div></div>
<div style="left:44px;top:693px;width:8px;height:30px"><div class="t" style="left:0;top:0px;font-size:10px;line-height:10px">5</div><div class="t" style="left:0;top:10px;font-size:10px;line-height:10px">0</div><div class="t" style="left:0;top:20px;font-size:10px;line-height:10px">0</div></div>
<div style="left:44px;top:738px;width:8px;height:30px"><div class="t" style="left:0;top:0px;font-size:10px;line-height:10px">5</div><div class="t" style="left:0;top:10px;font-size:10px;line-height:10px">5</div><div class="t" style="left:0;top:20px;font-size:10px;line-height:10px">0</div></div>
<div style="left:44px;top:783px;width:8px;height:30px"><div class="t" style="left:0;top:0px;font-size:10px;line-height:10px">6</div><div class="t" style="left:0;top:10px;font-size:10px;line-height:10px">0</div><div class="t" style="left:0;top:20px;font-size:10px;line-height:10px">0</div></div>
<div style="left:44px;top:829px;width:8px;height:30px"><div class="t" style="left:0;top:0px;font-size:10px;line-height:10px">6</div><div class="t" style="left:0;top:10px;font-size:10px;line-height:10px">5</div><div class="t" style="left:0;top:20px;font-size:10px;line-height:10px">0</div></div>
<div style="left:57px;top:99px;width:1243px;height:744px;background:#6b6b6b"></div>
<div style="left:1300px;top:83px;width:16px;height:760px;background:linear-gradient(90deg,#b0b0b0,#eeeeee 45%,#eeeeee 55%,#c4c4c4)"></div>
<div style="left:41px;top:843px;width:1275px;height:16px;background:#b9b9b9"></div>
<div style="left:41px;top:843px;width:47px;height:16px;background:#ececec"></div>
<div class="t" style="left:44px;top:845px;font-size:12px;color:#111">90.91%</div>
<div style="left:91px;top:847px;width:19px;height:10px;background:#8a8a8a;border-radius:1px"></div>
<svg style="position:absolute;left:92px;top:847px;" width="18" height="10" viewBox="0 0 18 10"><circle cx="5" cy="5" r="2.6" fill="none" stroke="#c8c8c8" stroke-width="2" stroke-dasharray="1.4 0.9"/><circle cx="5" cy="5" r="1.6" fill="#c8c8c8"/><path d="M10 4L12.5 1.5V3H14C15.5 3 16.5 4.5 16.5 6L15 8.5M13 5.5" fill="none" stroke="#c8c8c8" stroke-width="1.3"/></svg>
<div class="t" style="left:146px;top:845px;color:#111">文档<span style="font-size:11px">:258.0 K/258.0K</span></div>
<svg style="position:absolute;left:287px;top:846px;" width="7" height="10" viewBox="0 0 7 10"><path d="M0 0L6 5L0 10Z" fill="#222"/></svg>
<div style="left:297px;top:843px;width:1003px;height:16px;background:linear-gradient(#bdbdbd,#eeeeee 45%,#eeeeee 55%,#c4c4c4)"></div>
<div style="left:1300px;top:843px;width:16px;height:16px;background:#a9a9a9"></div>
<div style="left:1316px;top:63px;width:3px;height:797px;background:#555"></div>
<div style="left:1319px;top:63px;width:281px;height:12px;background:linear-gradient(#8c8c8c,#6c6c6c)"></div>
<svg style="position:absolute;left:1344px;top:66px;" width="10" height="7" viewBox="0 0 10 7"><path d="M4 0L0 3.5L4 7ZM9 0L5 3.5L9 7Z" fill="#333"/></svg>
<svg style="position:absolute;left:1587px;top:66px;" width="10" height="7" viewBox="0 0 10 7"><path d="M0 0L4 3.5L0 7ZM5 0L9 3.5L5 7Z" fill="#333"/></svg>
<div style="left:1319px;top:75px;width:37px;height:785px;background:#b9b9b9"></div>
<div style="left:1356px;top:75px;width:3px;height:785px;background:#555"></div>
<div style="left:1598px;top:63px;width:2px;height:797px;background:#555"></div>
<div style="left:1359px;top:75px;width:239px;height:785px;background:#a4a4a4"></div>
<svg style="position:absolute;left:448px;top:235px" width="462" height="473" viewBox="448 235 462 473" preserveAspectRatio="none">
<defs>
<filter id="blp462" x="-5%" y="-5%" width="110%" height="110%"><feGaussianBlur stdDeviation="0.6"/></filter>
<linearGradient id="stemp462" x1="0" y1="0" x2="1" y2="0.15"><stop offset="0" stop-color="#959595"/><stop offset="0.5" stop-color="#808080"/><stop offset="1" stop-color="#5e5e5e"/></linearGradient>
<linearGradient id="lpp462" x1="0" y1="0" x2="0.6" y2="1"><stop offset="0" stop-color="#bcbcbc"/><stop offset="0.55" stop-color="#a0a0a0"/><stop offset="1" stop-color="#7a7a7a"/></linearGradient>
<linearGradient id="tpp462" x1="0" y1="0" x2="0.4" y2="1"><stop offset="0" stop-color="#d6d6d6"/><stop offset="1" stop-color="#bdbdbd"/></linearGradient>
<linearGradient id="rpp462" x1="0" y1="0" x2="0.3" y2="1"><stop offset="0" stop-color="#b8b8b8"/><stop offset="1" stop-color="#8a8a8a"/></linearGradient>
<linearGradient id="fpp462" x1="0" y1="0" x2="0.5" y2="1"><stop offset="0" stop-color="#8a8a8a"/><stop offset="0.7" stop-color="#7e7e7e"/><stop offset="1" stop-color="#8c8c8c"/></linearGradient>
<linearGradient id="bpp462" x1="0" y1="0" x2="1" y2="0.3"><stop offset="0" stop-color="#9a9a9a"/><stop offset="1" stop-color="#b4b4b4"/></linearGradient>
<linearGradient id="rlp462" x1="1" y1="0" x2="0" y2="1"><stop offset="0" stop-color="#8a8a8a"/><stop offset="1" stop-color="#6a6a6a"/></linearGradient>
</defs>
<rect x="448" y="235" width="462" height="473" fill="#000"/>
<g filter="url(#blp462)">
<linearGradient id="ulp462" x1="0" y1="0" x2="0.2" y2="1"><stop offset="0" stop-color="#585858"/><stop offset="0.6" stop-color="#2e2e2e"/><stop offset="1" stop-color="#262626"/></linearGradient><path d="M448 611 C452 618 470 618 496 617 C486 622 481 632 482 646 C484 652 486 657 487 660 C500 662 510 667 520 670 C540 680 556 692 567 708 L448 708Z" fill="#2a2a2a"/><path d="M448 611 C452 618 470 618 496 617 C486 622 481 632 482 646 C470 655 458 662 448 668Z" fill="url(#ulp462)"/>
<path d="M910 545 C880 570 860 585 843 594 C834 600 832 612 834 622 C850 640 875 655 897 663 L910 666Z" fill="#353535"/>
<path d="M910 545 C880 570 860 585 843 594 C852 600 860 610 866 613 C880 610 897 596 910 586Z" fill="url(#rlp462)"/>
<path d="M833 621 L841 626 L838 617Z" fill="#aaa"/>
<path d="M683.1 421.3 L683.5 422.7 L683.8 424.6 L684.3 427.1 L684.9 429.8 L685.6 432.9 L686.4 436.0 L687.4 439.2 L688.6 442.3 L690.0 445.3 L691.5 448.3 L693.2 451.2 L695.0 454.2 L696.9 457.1 L698.7 459.9 L700.5 462.6 L702.2 465.2 L703.9 467.7 L705.6 470.1 L707.2 472.4 L708.9 474.7 L710.6 476.8 L712.2 479.0 L713.8 481.1 L715.4 483.3 L717.1 485.6 L718.7 487.8 L720.3 490.0 L722.0 492.2 L723.6 494.4 L725.2 496.7 L726.9 498.9 L728.5 501.2 L730.1 503.5 L731.8 505.9 L733.5 508.2 L735.2 510.6 L736.8 513.0 L738.4 515.3 L740.0 517.6 L741.4 519.9 L742.8 522.1 L744.1 524.3 L745.4 526.5 L746.7 528.7 L747.9 530.8 L749.0 533.0 L750.2 535.1 L751.2 537.3 L752.2 539.4 L753.2 541.6 L754.1 543.7 L755.0 545.9 L755.8 548.1 L756.6 550.2 L757.3 552.4 L758.1 554.6 L758.7 556.7 L759.3 558.8 L759.8 560.9 L760.3 563.1 L760.9 565.3 L761.4 567.6 L762.0 569.9 L762.6 572.3 L763.3 574.6 L763.9 577.0 L764.6 579.3 L765.3 581.7 L766.0 584.1 L766.7 586.5 L767.5 589.0 L768.3 591.5 L769.1 594.0 L770.0 596.6 L770.9 599.3 L771.8 601.9 L772.7 604.5 L773.6 607.2 L774.5 609.8 L775.4 612.5 L776.3 615.2 L777.1 617.9 L778.0 620.6 L778.9 623.4 L779.8 626.1 L780.7 628.9 L781.6 631.7 L782.5 634.5 L783.5 637.3 L784.6 640.1 L785.6 642.9 L786.7 645.6 L787.8 648.3 L788.8 651.0 L789.7 653.7 L790.6 656.4 L791.5 659.1 L792.3 662.0 L793.1 665.0 L793.8 667.9 L794.6 670.9 L795.3 673.7 L796.0 676.5 L796.6 679.1 L797.3 681.5 L797.8 683.7 L798.4 685.9 L798.9 687.9 L799.4 689.9 L799.8 691.8 L800.3 693.8 L800.7 695.9 L801.2 698.1 L801.6 700.4 L802.1 702.9 L802.5 705.3 L802.9 707.6 L803.3 709.6 L803.6 711.4 L803.8 712.7 L812.2 711.3 L812.0 710.0 L811.7 708.2 L811.4 706.2 L811.0 703.8 L810.6 701.4 L810.2 698.9 L809.7 696.4 L809.3 694.1 L808.8 692.0 L808.4 689.9 L808.0 687.9 L807.5 685.8 L807.0 683.8 L806.5 681.6 L805.9 679.3 L805.4 676.9 L804.7 674.3 L804.1 671.6 L803.4 668.7 L802.7 665.7 L801.9 662.7 L801.1 659.6 L800.3 656.6 L799.4 653.6 L798.5 650.7 L797.5 647.9 L796.5 645.0 L795.4 642.3 L794.4 639.5 L793.4 636.8 L792.4 634.1 L791.5 631.5 L790.6 628.8 L789.7 626.0 L788.8 623.3 L788.0 620.5 L787.2 617.8 L786.3 615.0 L785.5 612.2 L784.6 609.5 L783.7 606.8 L782.8 604.1 L781.9 601.4 L781.0 598.7 L780.2 596.1 L779.3 593.5 L778.5 591.0 L777.7 588.5 L777.0 586.1 L776.3 583.7 L775.6 581.3 L774.9 578.9 L774.3 576.6 L773.6 574.3 L773.0 572.0 L772.4 569.7 L771.8 567.5 L771.3 565.3 L770.8 563.0 L770.3 560.8 L769.8 558.5 L769.3 556.2 L768.6 553.8 L767.9 551.4 L767.2 549.1 L766.4 546.8 L765.6 544.4 L764.7 542.1 L763.8 539.8 L762.9 537.4 L761.9 535.1 L760.8 532.7 L759.7 530.4 L758.5 528.1 L757.3 525.8 L756.1 523.4 L754.8 521.1 L753.4 518.8 L752.0 516.5 L750.6 514.1 L749.1 511.7 L747.5 509.3 L745.9 506.8 L744.2 504.4 L742.5 501.9 L740.8 499.5 L739.2 497.2 L737.5 494.8 L735.9 492.5 L734.3 490.2 L732.6 487.9 L731.0 485.6 L729.4 483.4 L727.8 481.2 L726.2 478.9 L724.6 476.7 L722.9 474.4 L721.3 472.2 L719.7 470.0 L718.1 467.8 L716.5 465.7 L714.9 463.5 L713.4 461.2 L711.8 458.8 L710.2 456.3 L708.4 453.6 L706.7 450.8 L705.0 448.1 L703.3 445.3 L701.8 442.7 L700.5 440.1 L699.4 437.7 L698.5 435.3 L697.8 432.8 L697.1 430.1 L696.5 427.4 L696.0 424.8 L695.6 422.4 L695.2 420.4 L694.9 418.7Z" fill="url(#stemp462)"/>
<path d="M594 410 C612 412 630 415 650 420 C668 424 685 420 695 418 C685 430 670 438 648 438 C630 438 612 428 594 410Z" fill="url(#bpp462)"/>
<path d="M699 331 C708 345 713 365 712 380 C710 400 700 415 690 423 C695 395 698 360 699 331Z" fill="#8c8c8c"/>
<path d="M647 293 C670 305 690 320 702 345 C712 365 712 395 695 420 C680 400 670 370 660 340 C655 320 650 305 647 293Z" fill="url(#rpp462)"/><path d="M650 300 Q680 330 695 400" fill="none" stroke="#555" stroke-opacity="0.3" stroke-width="0.7"/><path d="M655 305 Q690 340 700 395" fill="none" stroke="#555" stroke-opacity="0.3" stroke-width="0.7"/><path d="M660 312 Q700 350 705 385" fill="none" stroke="#555" stroke-opacity="0.3" stroke-width="0.7"/><path d="M652 310 Q668 340 678 380" fill="none" stroke="#555" stroke-opacity="0.3" stroke-width="0.7"/>
<path d="M601 277 L604 272 L607 276 L611 271 L615 274 L619 268 L623 271 L626 269 C630 276 640 285 647 293 C652 310 658 325 662 342 C640 330 620 310 603 300Z" fill="url(#tpp462)"/><path d="M607 280 Q620 300 640 322" fill="none" stroke="#666" stroke-opacity="0.35" stroke-width="0.7"/><path d="M613 276 Q630 300 652 330" fill="none" stroke="#666" stroke-opacity="0.35" stroke-width="0.7"/><path d="M620 273 Q640 300 657 335" fill="none" stroke="#666" stroke-opacity="0.35" stroke-width="0.7"/><path d="M605 290 Q620 305 633 318" fill="none" stroke="#666" stroke-opacity="0.35" stroke-width="0.7"/>
<path d="M603 298 C630 305 650 325 662 342 C650 360 645 380 648 420 C630 410 612 395 604 370 C598 350 598 320 603 298Z" fill="url(#lpp462)"/><path d="M606 305 Q606 350 628 398" fill="none" stroke="#555" stroke-opacity="0.35" stroke-width="0.7"/><path d="M612 308 Q614 355 634 402" fill="none" stroke="#555" stroke-opacity="0.35" stroke-width="0.7"/><path d="M620 312 Q622 358 640 405" fill="none" stroke="#555" stroke-opacity="0.35" stroke-width="0.7"/><path d="M628 317 Q630 360 645 408" fill="none" stroke="#555" stroke-opacity="0.35" stroke-width="0.7"/><path d="M637 323 Q636 350 640 340" fill="none" stroke="#555" stroke-opacity="0.35" stroke-width="0.7"/><path d="M603 320 Q600 360 618 390" fill="none" stroke="#555" stroke-opacity="0.35" stroke-width="0.7"/>
<path d="M637 335 C655 340 688 352 702 380 C708 400 700 415 690 423 C670 428 650 424 640 410 C630 395 627 372 629 352 C630 345 633 339 637 335Z" fill="url(#fpp462)"/><path d="M637 340 Q640 390 660 420" fill="none" stroke="#555" stroke-opacity="0.3" stroke-width="0.7"/><path d="M640 340 Q660 380 680 420" fill="none" stroke="#555" stroke-opacity="0.3" stroke-width="0.7"/><path d="M645 342 Q680 370 695 410" fill="none" stroke="#555" stroke-opacity="0.3" stroke-width="0.7"/><path d="M636 345 Q632 390 648 415" fill="none" stroke="#555" stroke-opacity="0.3" stroke-width="0.7"/></g>
</svg>
<div style="left:1319px;top:75px;width:37px;height:41px;background:#b9b9b9"></div>
<div style="left:1328px;top:79px;width:1px;height:4px;background:#8a8a8a"></div>
<div style="left:1330px;top:79px;width:1px;height:4px;background:#8a8a8a"></div>
<div style="left:1332px;top:79px;width:1px;height:4px;background:#8a8a8a"></div>
<div style="left:1334px;top:79px;width:1px;height:4px;background:#8a8a8a"></div>
<div style="left:1336px;top:79px;width:1px;height:4px;background:#8a8a8a"></div>
<div style="left:1338px;top:79px;width:1px;height:4px;background:#8a8a8a"></div>
<div style="left:1340px;top:79px;width:1px;height:4px;background:#8a8a8a"></div>
<div style="left:1342px;top:79px;width:1px;height:4px;background:#8a8a8a"></div>
<div style="left:1344px;top:79px;width:1px;height:4px;background:#8a8a8a"></div>
<div style="left:1346px;top:79px;width:1px;height:4px;background:#8a8a8a"></div>
<svg style="position:absolute;left:1328px;top:88px;" width="20" height="19" viewBox="0 0 20 19"><path d="M6 1L11 3.5V9L6 11.5L1 9V3.5Z" fill="#666" stroke="#2b2b2b" stroke-width="1.1"/><path d="M1 3.5L6 6L11 3.5M6 6V11.5" fill="none" stroke="#2b2b2b" stroke-width="1"/><rect x="13.5" y="2" width="3" height="3" fill="none" stroke="#2b2b2b"/><rect x="13.5" y="6.5" width="3" height="3" fill="none" stroke="#2b2b2b"/><rect x="1.5" y="14" width="10" height="3.5" fill="none" stroke="#2b2b2b"/><rect x="13" y="14" width="4.5" height="3.5" fill="none" stroke="#2b2b2b"/></svg>
<div style="left:1319px;top:116px;width:37px;height:2px;background:#8a8a8a"></div>
<div style="left:1328px;top:120px;width:1px;height:4px;background:#8a8a8a"></div>
<div style="left:1330px;top:120px;width:1px;height:4px;background:#8a8a8a"></div>
<div style="left:1332px;top:120px;width:1px;height:4px;background:#8a8a8a"></div>
<div style="left:1334px;top:120px;width:1px;height:4px;background:#8a8a8a"></div>
<div style="left:1336px;top:120px;width:1px;height:4px;background:#8a8a8a"></div>
<div style="left:1338px;top:120px;width:1px;height:4px;background:#8a8a8a"></div>
<div style="left:1340px;top:120px;width:1px;height:4px;background:#8a8a8a"></div>
<div style="left:1342px;top:120px;width:1px;height:4px;background:#8a8a8a"></div>
<div style="left:1344px;top:120px;width:1px;height:4px;background:#8a8a8a"></div>
<div style="left:1346px;top:120px;width:1px;height:4px;background:#8a8a8a"></div>
<div class="t" style="left:1331px;top:131px;font-size:17px;line-height:17px;font-weight:bold;color:#333">A</div>
<div style="left:1344px;top:131px;width:1px;height:17px;background:#333"></div>
<div class="t" style="left:1332px;top:157px;font-size:17px;line-height:17px;font-weight:bold;color:#333">¶</div>
<div style="left:1319px;top:184px;width:37px;height:2px;background:#8a8a8a"></div>
<div style="left:1319px;top:186px;width:37px;height:674px;background:#b9b9b9"></div>
<div style="left:1359px;top:75px;width:239px;height:129px;background:#b9b9b9"></div>
<div style="left:1359px;top:75px;width:239px;height:17px;background:#808080;border-top:1px solid #6a6a6a"></div>
<div style="left:1359px;top:75px;width:36px;height:18px;background:#b9b9b9;border-top:1px solid #b9b9b9"></div>
<div class="t" style="left:1368px;top:78px;color:#222">颜色</div>
<div style="left:1395px;top:76px;width:36px;height:16px;background:#9b9b9b;border-left:1px solid #6d6d6d;border-right:1px solid #6d6d6d"></div>
<div class="t" style="left:1404px;top:78px;color:#222">色板</div>
<div style="left:1431px;top:76px;width:61px;height:16px;background:#9b9b9b;border-left:1px solid #6d6d6d;border-right:1px solid #6d6d6d"></div>
<div class="t" style="left:1440px;top:78px;color:#222">历史记录</div>
<svg style="position:absolute;left:1581px;top:79px;" width="14" height="10" viewBox="0 0 14 10"><path d="M0 3H5L2.5 6Z" fill="#2b2b2b"/><path d="M6 1.5H14M6 4.5H14M6 7.5H14M6 10H14" stroke="#2b2b2b" stroke-width="1.2"/></svg>
<div style="left:1374px;top:113px;width:20px;height:20px;background:#fff;border:1px solid #555"></div>
<div style="left:1363px;top:102px;width:22px;height:22px;background:#3c3c3c;border:2px solid #fff;outline:1px solid #6a6a6a;outline-offset:-1px"></div>
<div style="left:1365px;top:104px;width:18px;height:18px;background:#3c3c3c;border:1px solid #222"></div>
<div class="t" style="left:1402px;top:130px;font-size:11px;color:#222">K</div>
<div style="left:1418px;top:130px;width:112px;height:6px;background:linear-gradient(90deg,#fff,#000);border:1px solid #888"></div>
<svg style="position:absolute;left:1510px;top:136px;" width="12" height="10" viewBox="0 0 12 10"><path d="M1 9V5L6 1L11 5V9Z" fill="#e0e0e0" stroke="#555"/></svg>
<div style="left:1536px;top:128px;width:38px;height:19px;background:#f0f0f0;border:1px solid #888"></div>
<div class="t" style="left:1539px;top:131px;font-size:12px;color:#111">88</div>
<div class="t" style="left:1577px;top:130px;font-size:12px;color:#111">%</div>
<svg style="position:absolute;left:1369px;top:156px;" width="14" height="14" viewBox="0 0 14 14"><path d="M7 1L13.5 13H0.5Z" fill="#2b2b2b"/><rect x="6.2" y="4.5" width="1.6" height="5" fill="#fff"/><rect x="6.2" y="10.5" width="1.6" height="1.6" fill="#fff"/></svg>
<div style="left:1385px;top:157px;width:14px;height:14px;background:#3c3c3c;border:1px solid #fff;outline:1px solid #555"></div>
<div style="left:1363px;top:182px;width:219px;height:16px;background:linear-gradient(rgba(255,255,255,0.9),rgba(255,255,255,0) 42%,rgba(0,0,0,0) 52%,rgba(0,0,0,0.92)),linear-gradient(90deg,#e8302a,#f29a20 8%,#fff100 17%,#8cc63f 27%,#00a651 36%,#00a99d 45%,#00aeef 54%,#0072bc 60%,#2e3192 66%,#662d91 74%,#92278f 80%,#ec008c 88%,#ed1c44 96%);border:1px solid #999"></div>
<div style="left:1573px;top:183px;width:8px;height:7px;background:#fff"></div>
<div style="left:1573px;top:190px;width:8px;height:7px;background:#000"></div>
<div style="left:1359px;top:203px;width:239px;height:4px;background:#5a5a5a"></div>
<div style="left:1359px;top:207px;width:239px;height:129px;background:#b9b9b9"></div>
<div style="left:1359px;top:207px;width:239px;height:17px;background:#808080;border-top:1px solid #6a6a6a"></div>
<div style="left:1359px;top:207px;width:37px;height:18px;background:#b9b9b9;border-top:1px solid #b9b9b9"></div>
<div class="t" style="left:1368px;top:210px;color:#222">调整</div>
<div style="left:1396px;top:208px;width:37px;height:16px;background:#9b9b9b;border-left:1px solid #6d6d6d;border-right:1px solid #6d6d6d"></div>
<div class="t" style="left:1405px;top:210px;color:#222">样式</div>
<svg style="position:absolute;left:1581px;top:211px;" width="14" height="10" viewBox="0 0 14 10"><path d="M0 3H5L2.5 6Z" fill="#2b2b2b"/><path d="M6 1.5H14M6 4.5H14M6 7.5H14M6 10H14" stroke="#2b2b2b" stroke-width="1.2"/></svg>
<div class="t" style="left:1368px;top:230px;color:#111">添加调整</div>
<svg style="position:absolute;left:1406px;top:252px;" width="19" height="19" viewBox="0 0 19 19"><circle cx="9.5" cy="9.5" r="4.5" fill="#2b2b2b"/><path d="M9.5 5A4.5 4.5 0 0 1 9.5 14Z" fill="#ddd"/><path d="M9.5 0.5V3M9.5 16V18.5M0.5 9.5H3M16 9.5H18.5M3 3L4.8 4.8M14.2 14.2L16 16M16 3L14.2 4.8M4.8 14.2L3 16" stroke="#2b2b2b" stroke-width="1.6"/></svg>
<svg style="position:absolute;left:1431px;top:255px;" width="19" height="14" viewBox="0 0 19 14"><path d="M0 13V6L1 8L2 5L3 8L4 3L5 7L6 4L7 7L8 1L9 6L10 3L11 7L12 4L13 8L14 2L15 7L16 5L17 8L18 6V13Z" fill="#2b2b2b"/></svg>
<svg style="position:absolute;left:1456px;top:255px;" width="17" height="15" viewBox="0 0 17 15"><rect x="0.5" y="0.5" width="16" height="13" fill="#ccc" stroke="#2b2b2b"/><path d="M0.5 5H16.5M0.5 9.5H16.5M6 0.5V13.5M11 0.5V13.5" stroke="#888"/><path d="M1 13C6 13 7 1 16 1" fill="none" stroke="#2b2b2b" stroke-width="1.5"/></svg>
<svg style="position:absolute;left:1480px;top:255px;" width="17" height="15" viewBox="0 0 17 15"><rect x="0.5" y="0.5" width="16" height="13" fill="#eee" stroke="#2b2b2b"/><path d="M1 13.5L16.5 0.5V13.5Z" fill="#2b2b2b"/><path d="M2 4H7M4.5 1.5V6.5" stroke="#2b2b2b" stroke-width="1.2"/><path d="M10 10H15" stroke="#eee" stroke-width="1.2"/></svg>
<svg style="position:absolute;left:1504px;top:255px;" width="17" height="16" viewBox="0 0 17 16"><defs><radialGradient id="tg"><stop offset="0" stop-color="#aaa"/><stop offset="1" stop-color="#666"/></radialGradient></defs><path d="M0.5 0.5H16.5L8.5 15.5Z" fill="url(#tg)" stroke="#777"/></svg>
<svg style="position:absolute;left:1396px;top:281px;" width="17" height="16" viewBox="0 0 17 16"><rect x="0.5" y="0.5" width="16" height="14" fill="#999" stroke="#6a6a6a"/><rect x="1" y="1" width="15" height="6" fill="#ccc"/><path d="M3 1V6M6 1V6M9 1V6M12 1V6" stroke="#888" stroke-width="1.5"/><rect x="1" y="8" width="15" height="6" fill="#777"/></svg>
<svg style="position:absolute;left:1419px;top:281px;" width="18" height="16" viewBox="0 0 18 16"><path d="M9 1V12M4 3H14M5 12H13" stroke="#6a6a6a" stroke-width="1.6"/><path d="M4 3L1 10H7Z M14 3L11 10H17Z" fill="none" stroke="#6a6a6a"/><path d="M1 10A3 2.5 0 0 0 7 10ZM11 10A3 2.5 0 0 0 17 10Z" fill="#6a6a6a"/><path d="M7 1H11L9 4Z" fill="#6a6a6a"/></svg>
<svg style="position:absolute;left:1444px;top:281px;" width="17" height="16" viewBox="0 0 17 16"><rect x="0.5" y="0.5" width="16" height="14" fill="#ddd" stroke="#6a6a6a"/><rect x="1" y="1" width="7.5" height="13" fill="#777"/></svg>
<svg style="position:absolute;left:1467px;top:281px;" width="19" height="17" viewBox="0 0 19 17"><rect x="0.5" y="2" width="12" height="9" fill="#888" stroke="#6a6a6a"/><rect x="2" y="0.5" width="4" height="2" fill="#6a6a6a"/><circle cx="12" cy="10" r="5.5" fill="#aaa" stroke="#6a6a6a" stroke-width="1.4"/><circle cx="12" cy="10" r="3" fill="#999"/></svg>
<svg style="position:absolute;left:1491px;top:280px;" width="18" height="18" viewBox="0 0 18 18"><circle cx="9" cy="5.5" r="4.5" fill="#6a6a6a"/><circle cx="5.5" cy="11.5" r="4.5" fill="#6a6a6a"/><circle cx="12.5" cy="11.5" r="4.5" fill="#6a6a6a"/><circle cx="9" cy="9.5" r="2" fill="#ccc"/></svg>
<svg style="position:absolute;left:1516px;top:281px;" width="17" height="16" viewBox="0 0 17 16"><rect x="0.5" y="0.5" width="16" height="14" fill="#999" stroke="#6a6a6a"/><path d="M0.5 5H16.5M0.5 10H16.5M6 0.5V14.5M11 0.5V14.5" stroke="#ccc" stroke-width="1.2"/></svg>
<svg style="position:absolute;left:1408px;top:308px;" width="17" height="16" viewBox="0 0 17 16"><rect x="0.5" y="0.5" width="16" height="14" fill="#ccc" stroke="#2b2b2b"/><path d="M1 1H16L1 14Z" fill="#2b2b2b"/><ellipse cx="8.5" cy="7.5" rx="4.5" ry="3.5" fill="#2b2b2b" transform="rotate(-25 8.5 7.5)"/></svg>
<svg style="position:absolute;left:1432px;top:308px;" width="17" height="16" viewBox="0 0 17 16"><defs><linearGradient id="pg" x1="0" y1="0" x2="1" y2="1"><stop offset="0" stop-color="#222"/><stop offset=".3" stop-color="#999"/><stop offset=".5" stop-color="#333"/><stop offset=".7" stop-color="#bbb"/><stop offset="1" stop-color="#222"/></linearGradient></defs><rect x="0.5" y="0.5" width="16" height="14" fill="url(#pg)" stroke="#2b2b2b"/></svg>
<svg style="position:absolute;left:1456px;top:308px;" width="17" height="16" viewBox="0 0 17 16"><rect x="0.5" y="0.5" width="16" height="14" fill="#2b2b2b" stroke="#2b2b2b"/><path d="M2 12L5 10L7 10L9 7L11 7L14 3L16 3V6L13 9L10 9L8 12Z" fill="#ddd"/></svg>
<svg style="position:absolute;left:1480px;top:308px;" width="17" height="16" viewBox="0 0 17 16"><rect x="0.5" y="0.5" width="16" height="14" fill="#aaa" stroke="#6a6a6a"/><path d="M1 1L8.5 7.5L16 1ZM1 14L8.5 7.5L16 14Z" fill="#888"/></svg>
<div style="left:1504px;top:308px;width:17px;height:16px;background:linear-gradient(90deg,#111,#fff);border:1px solid #222"></div>
<div style="left:1359px;top:335px;width:239px;height:4px;background:#5a5a5a"></div>
<div style="left:1359px;top:339px;width:239px;height:521px;background:#a4a4a4"></div>
<div style="left:1359px;top:339px;width:239px;height:16px;background:#808080;border-top:1px solid #6a6a6a"></div>
<div style="left:1359px;top:339px;width:37px;height:17px;background:#b9b9b9;border-top:1px solid #b9b9b9"></div>
<div class="t" style="left:1368px;top:342px;color:#222">图层</div>
<div style="left:1396px;top:340px;width:38px;height:15px;background:#9b9b9b;border-left:1px solid #6d6d6d;border-right:1px solid #6d6d6d"></div>
<div class="t" style="left:1405px;top:342px;color:#222">通道</div>
<div style="left:1434px;top:340px;width:37px;height:15px;background:#9b9b9b;border-left:1px solid #6d6d6d;border-right:1px solid #6d6d6d"></div>
<div class="t" style="left:1443px;top:342px;color:#222">路径</div>
<svg style="position:absolute;left:1581px;top:343px;" width="14" height="10" viewBox="0 0 14 10"><path d="M0 3H5L2.5 6Z" fill="#2b2b2b"/><path d="M6 1.5H14M6 4.5H14M6 7.5H14M6 10H14" stroke="#2b2b2b" stroke-width="1.2"/></svg>
<div style="left:1359px;top:356px;width:239px;height:28px;background:#b9b9b9;border-bottom:1px solid #9a9a9a"></div>
<div style="left:1364px;top:360px;width:69px;height:20px;background:linear-gradient(#d0d0d0,#bcbcbc);border:1px solid #8a8a8a;border-radius:3px"></div>
<svg style="position:absolute;left:1370px;top:364px;" width="11" height="12" viewBox="0 0 11 12"><circle cx="6.5" cy="4.5" r="3.5" fill="none" stroke="#555" stroke-width="1.6"/><path d="M4 7L1 11" stroke="#555" stroke-width="2"/></svg>
<div class="t" style="left:1385px;top:363px;color:#555">类型</div>
<svg style="position:absolute;left:1423px;top:364px;" width="6" height="11" viewBox="0 0 6 11"><path d="M0 4L3 1L6 4ZM0 7L3 10L6 7Z" fill="#555"/></svg>
<svg style="position:absolute;left:1454px;top:364px;" width="14" height="12" viewBox="0 0 14 12"><rect x="0.5" y="0.5" width="13" height="10" fill="#ddd" stroke="#6a6a6a"/><path d="M2 9L5 5L7 7L9 5L12 9Z" fill="#6a6a6a"/><circle cx="10" cy="3" r="1.3" fill="#6a6a6a"/></svg>
<svg style="position:absolute;left:1479px;top:363px;" width="13" height="13" viewBox="0 0 13 13"><circle cx="6.5" cy="6.5" r="5.5" fill="#ddd" stroke="#6a6a6a" stroke-width="1.2"/><path d="M10.5 2.5A5.5 5.5 0 0 1 2.5 10.5Z" fill="#6a6a6a"/></svg>
<div class="t" style="left:1502px;top:361px;font-family:'Liberation Serif',serif;font-size:16px;line-height:16px;font-weight:bold;color:#6a6a6a">T</div>
<svg style="position:absolute;left:1526px;top:363px;" width="13" height="13" viewBox="0 0 13 13"><rect x="2" y="2" width="9" height="9" fill="none" stroke="#6a6a6a" stroke-width="1.2"/><rect x="0.5" y="0.5" width="3" height="3" fill="#ddd" stroke="#6a6a6a"/><rect x="9.5" y="0.5" width="3" height="3" fill="#ddd" stroke="#6a6a6a"/><rect x="0.5" y="9.5" width="3" height="3" fill="#ddd" stroke="#6a6a6a"/><rect x="9.5" y="9.5" width="3" height="3" fill="#ddd" stroke="#6a6a6a"/></svg>
<svg style="position:absolute;left:1550px;top:362px;" width="13" height="14" viewBox="0 0 13 14"><path d="M5 1H9L12 4V9H5Z" fill="#ddd" stroke="#6a6a6a"/><rect x="0.5" y="6.5" width="6" height="6" fill="#ddd" stroke="#6a6a6a"/><rect x="4" y="5" width="5" height="4" fill="#6a6a6a"/></svg>
<div style="left:1586px;top:362px;width:10px;height:17px;background:linear-gradient(#bbb,#999);border:1px solid #999;border-radius:2px"></div>
<div style="left:1359px;top:384px;width:239px;height:27px;background:#b9b9b9;border-bottom:1px solid #9a9a9a"></div>
<div style="left:1364px;top:388px;width:110px;height:20px;background:linear-gradient(#d0d0d0,#bcbcbc);border:1px solid #8a8a8a;border-radius:3px"></div>
<div class="t" style="left:1372px;top:391px;color:#555">正常</div>
<svg style="position:absolute;left:1464px;top:392px;" width="6" height="11" viewBox="0 0 6 11"><path d="M0 4L3 1L6 4ZM0 7L3 10L6 7Z" fill="#555"/></svg>
<div class="t" style="left:1482px;top:390px;color:#555">不透明度:</div>
<div style="left:1539px;top:389px;width:55px;height:19px;background:#c9c9c9;border:1px solid #8a8a8a;border-radius:2px"></div>
<div style="left:1574px;top:390px;width:1px;height:17px;background:#8a8a8a"></div>
<div class="t" style="left:1542px;top:392px;font-size:11px;color:#666">100%</div>
<svg style="position:absolute;left:1581px;top:396px;" width="7" height="4" viewBox="0 0 7 4"><path d="M0 0H7L3.5 4Z" fill="#555"/></svg>
<div style="left:1359px;top:411px;width:239px;height:30px;background:#b9b9b9;border-bottom:1px solid #9a9a9a"></div>
<div class="t" style="left:1365px;top:418px;color:#555">锁定:</div>
<svg style="position:absolute;left:1402px;top:419px;" width="12" height="12" viewBox="0 0 12 12"><rect x="0.5" y="0.5" width="11" height="11" fill="#eee" stroke="#6a6a6a"/><path d="M1 1H4V4H1ZM7 1H10V4H7ZM4 4H7V7H4ZM1 7H4V10H1ZM7 7H10V10H7Z" fill="#aaa"/></svg>
<svg style="position:absolute;left:1423px;top:417px;" width="17" height="15" viewBox="0 0 17 15"><path d="M16 1L8 9" stroke="#6a6a6a" stroke-width="2"/><path d="M8 8C5 8 5 13 0 13C5 15 10 13 9 10Z" fill="#6a6a6a"/></svg>
<svg style="position:absolute;left:1445px;top:417px;" width="15" height="15" viewBox="0 0 15 15"><path d="M7.5 1V14M1 7.5H14" stroke="#6a6a6a" stroke-width="1.4"/><path d="M5 3.5h5l-2.5-3zM5 11.5h5l-2.5 3zM3.5 5v5l-3-2.5zM11.5 5v5l3-2.5z" fill="#6a6a6a"/></svg>
<svg style="position:absolute;left:1469px;top:418px;" width="12" height="13" viewBox="0 0 12 13"><path d="M3 6V4A3 3 0 0 1 9 4V6" fill="none" stroke="#6a6a6a" stroke-width="1.6"/><rect x="1" y="6" width="10" height="7" fill="#6a6a6a"/></svg>
<div class="t" style="left:1506px;top:418px;color:#555">填充:</div>
<div style="left:1539px;top:417px;width:55px;height:19px;background:#c9c9c9;border:1px solid #8a8a8a;border-radius:2px"></div>
<div style="left:1574px;top:418px;width:1px;height:17px;background:#8a8a8a"></div>
<div class="t" style="left:1542px;top:420px;font-size:11px;color:#666">100%</div>
<svg style="position:absolute;left:1581px;top:424px;" width="7" height="4" viewBox="0 0 7 4"><path d="M0 0H7L3.5 4Z" fill="#555"/></svg>
<div style="left:1359px;top:441px;width:31px;height:40px;background:#b9b9b9;border-bottom:1px solid #8a8a8a;border-right:1px solid #8a8a8a"></div>
<div style="left:1390px;top:441px;width:194px;height:40px;background:#a6b8dc;border-bottom:1px solid #8a8a8a"></div>
<svg style="position:absolute;left:1366px;top:455px;" width="16" height="10" viewBox="0 0 16 10"><path d="M1 5C4 0 12 0 15 5C12 10 4 10 1 5Z" fill="#eee" stroke="#2b2b2b" stroke-width="1.2"/><circle cx="8" cy="5" r="2.8" fill="#2b2b2b"/></svg>
<div style="left:1392px;top:444px;width:34px;height:34px;background:#333"></div>
<svg style="position:absolute;left:1393px;top:445px" width="32" height="32" viewBox="448 235 462 473" preserveAspectRatio="none">
<defs>
<filter id="blp32" x="-5%" y="-5%" width="110%" height="110%"><feGaussianBlur stdDeviation="0.25"/></filter>
<linearGradient id="stemp32" x1="0" y1="0" x2="1" y2="0.15"><stop offset="0" stop-color="#959595"/><stop offset="0.5" stop-color="#808080"/><stop offset="1" stop-color="#5e5e5e"/></linearGradient>
<linearGradient id="lpp32" x1="0" y1="0" x2="0.6" y2="1"><stop offset="0" stop-color="#bcbcbc"/><stop offset="0.55" stop-color="#a0a0a0"/><stop offset="1" stop-color="#7a7a7a"/></linearGradient>
<linearGradient id="tpp32" x1="0" y1="0" x2="0.4" y2="1"><stop offset="0" stop-color="#d6d6d6"/><stop offset="1" stop-color="#bdbdbd"/></linearGradient>
<linearGradient id="rpp32" x1="0" y1="0" x2="0.3" y2="1"><stop offset="0" stop-color="#b8b8b8"/><stop offset="1" stop-color="#8a8a8a"/></linearGradient>
<linearGradient id="fpp32" x1="0" y1="0" x2="0.5" y2="1"><stop offset="0" stop-color="#8a8a8a"/><stop offset="0.7" stop-color="#7e7e7e"/><stop offset="1" stop-color="#8c8c8c"/></linearGradient>
<linearGradient id="bpp32" x1="0" y1="0" x2="1" y2="0.3"><stop offset="0" stop-color="#9a9a9a"/><stop offset="1" stop-color="#b4b4b4"/></linearGradient>
<linearGradient id="rlp32" x1="1" y1="0" x2="0" y2="1"><stop offset="0" stop-color="#8a8a8a"/><stop offset="1" stop-color="#6a6a6a"/></linearGradient>
</defs>
<rect x="448" y="235" width="462" height="473" fill="#000"/>
<g filter="url(#blp32)">
<linearGradient id="ulp32" x1="0" y1="0" x2="0.2" y2="1"><stop offset="0" stop-color="#585858"/><stop offset="0.6" stop-color="#2e2e2e"/><stop offset="1" stop-color="#262626"/></linearGradient><path d="M448 611 C452 618 470 618 496 617 C486 622 481 632 482 646 C484 652 486 657 487 660 C500 662 510 667 520 670 C540 680 556 692 567 708 L448 708Z" fill="#2a2a2a"/><path d="M448 611 C452 618 470 618 496 617 C486 622 481 632 482 646 C470 655 458 662 448 668Z" fill="url(#ulp32)"/>
<path d="M910 545 C880 570 860 585 843 594 C834 600 832 612 834 622 C850 640 875 655 897 663 L910 666Z" fill="#353535"/>
<path d="M910 545 C880 570 860 585 843 594 C852 600 860 610 866 613 C880 610 897 596 910 586Z" fill="url(#rlp32)"/>
<path d="M833 621 L841 626 L838 617Z" fill="#aaa"/>
<path d="M683.1 421.3 L683.5 422.7 L683.8 424.6 L684.3 427.1 L684.9 429.8 L685.6 432.9 L686.4 436.0 L687.4 439.2 L688.6 442.3 L690.0 445.3 L691.5 448.3 L693.2 451.2 L695.0 454.2 L696.9 457.1 L698.7 459.9 L700.5 462.6 L702.2 465.2 L703.9 467.7 L705.6 470.1 L707.2 472.4 L708.9 474.7 L710.6 476.8 L712.2 479.0 L713.8 481.1 L715.4 483.3 L717.1 485.6 L718.7 487.8 L720.3 490.0 L722.0 492.2 L723.6 494.4 L725.2 496.7 L726.9 498.9 L728.5 501.2 L730.1 503.5 L731.8 505.9 L733.5 508.2 L735.2 510.6 L736.8 513.0 L738.4 515.3 L740.0 517.6 L741.4 519.9 L742.8 522.1 L744.1 524.3 L745.4 526.5 L746.7 528.7 L747.9 530.8 L749.0 533.0 L750.2 535.1 L751.2 537.3 L752.2 539.4 L753.2 541.6 L754.1 543.7 L755.0 545.9 L755.8 548.1 L756.6 550.2 L757.3 552.4 L758.1 554.6 L758.7 556.7 L759.3 558.8 L759.8 560.9 L760.3 563.1 L760.9 565.3 L761.4 567.6 L762.0 569.9 L762.6 572.3 L763.3 574.6 L763.9 577.0 L764.6 579.3 L765.3 581.7 L766.0 584.1 L766.7 586.5 L767.5 589.0 L768.3 591.5 L769.1 594.0 L770.0 596.6 L770.9 599.3 L771.8 601.9 L772.7 604.5 L773.6 607.2 L774.5 609.8 L775.4 612.5 L776.3 615.2 L777.1 617.9 L778.0 620.6 L778.9 623.4 L779.8 626.1 L780.7 628.9 L781.6 631.7 L782.5 634.5 L783.5 637.3 L784.6 640.1 L785.6 642.9 L786.7 645.6 L787.8 648.3 L788.8 651.0 L789.7 653.7 L790.6 656.4 L791.5 659.1 L792.3 662.0 L793.1 665.0 L793.8 667.9 L794.6 670.9 L795.3 673.7 L796.0 676.5 L796.6 679.1 L797.3 681.5 L797.8 683.7 L798.4 685.9 L798.9 687.9 L799.4 689.9 L799.8 691.8 L800.3 693.8 L800.7 695.9 L801.2 698.1 L801.6 700.4 L802.1 702.9 L802.5 705.3 L802.9 707.6 L803.3 709.6 L803.6 711.4 L803.8 712.7 L812.2 711.3 L812.0 710.0 L811.7 708.2 L811.4 706.2 L811.0 703.8 L810.6 701.4 L810.2 698.9 L809.7 696.4 L809.3 694.1 L808.8 692.0 L808.4 689.9 L808.0 687.9 L807.5 685.8 L807.0 683.8 L806.5 681.6 L805.9 679.3 L805.4 676.9 L804.7 674.3 L804.1 671.6 L803.4 668.7 L802.7 665.7 L801.9 662.7 L801.1 659.6 L800.3 656.6 L799.4 653.6 L798.5 650.7 L797.5 647.9 L796.5 645.0 L795.4 642.3 L794.4 639.5 L793.4 636.8 L792.4 634.1 L791.5 631.5 L790.6 628.8 L789.7 626.0 L788.8 623.3 L788.0 620.5 L787.2 617.8 L786.3 615.0 L785.5 612.2 L784.6 609.5 L783.7 606.8 L782.8 604.1 L781.9 601.4 L781.0 598.7 L780.2 596.1 L779.3 593.5 L778.5 591.0 L777.7 588.5 L777.0 586.1 L776.3 583.7 L775.6 581.3 L774.9 578.9 L774.3 576.6 L773.6 574.3 L773.0 572.0 L772.4 569.7 L771.8 567.5 L771.3 565.3 L770.8 563.0 L770.3 560.8 L769.8 558.5 L769.3 556.2 L768.6 553.8 L767.9 551.4 L767.2 549.1 L766.4 546.8 L765.6 544.4 L764.7 542.1 L763.8 539.8 L762.9 537.4 L761.9 535.1 L760.8 532.7 L759.7 530.4 L758.5 528.1 L757.3 525.8 L756.1 523.4 L754.8 521.1 L753.4 518.8 L752.0 516.5 L750.6 514.1 L749.1 511.7 L747.5 509.3 L745.9 506.8 L744.2 504.4 L742.5 501.9 L740.8 499.5 L739.2 497.2 L737.5 494.8 L735.9 492.5 L734.3 490.2 L732.6 487.9 L731.0 485.6 L729.4 483.4 L727.8 481.2 L726.2 478.9 L724.6 476.7 L722.9 474.4 L721.3 472.2 L719.7 470.0 L718.1 467.8 L716.5 465.7 L714.9 463.5 L713.4 461.2 L711.8 458.8 L710.2 456.3 L708.4 453.6 L706.7 450.8 L705.0 448.1 L703.3 445.3 L701.8 442.7 L700.5 440.1 L699.4 437.7 L698.5 435.3 L697.8 432.8 L697.1 430.1 L696.5 427.4 L696.0 424.8 L695.6 422.4 L695.2 420.4 L694.9 418.7Z" fill="url(#stemp32)"/>
<path d="M594 410 C612 412 630 415 650 420 C668 424 685 420 695 418 C685 430 670 438 648 438 C630 438 612 428 594 410Z" fill="url(#bpp32)"/>
<path d="M699 331 C708 345 713 365 712 380 C710 400 700 415 690 423 C695 395 698 360 699 331Z" fill="#8c8c8c"/>
<path d="M647 293 C670 305 690 320 702 345 C712 365 712 395 695 420 C680 400 670 370 660 340 C655 320 650 305 647 293Z" fill="url(#rpp32)"/><path d="M650 300 Q680 330 695 400" fill="none" stroke="#555" stroke-opacity="0.3" stroke-width="0.7"/><path d="M655 305 Q690 340 700 395" fill="none" stroke="#555" stroke-opacity="0.3" stroke-width="0.7"/><path d="M660 312 Q700 350 705 385" fill="none" stroke="#555" stroke-opacity="0.3" stroke-width="0.7"/><path d="M652 310 Q668 340 678 380" fill="none" stroke="#555" stroke-opacity="0.3" stroke-width="0.7"/>
<path d="M601 277 L604 272 L607 276 L611 271 L615 274 L619 268 L623 271 L626 269 C630 276 640 285 647 293 C652 310 658 325 662 342 C640 330 620 310 603 300Z" fill="url(#tpp32)"/><path d="M607 280 Q620 300 640 322" fill="none" stroke="#666" stroke-opacity="0.35" stroke-width="0.7"/><path d="M613 276 Q630 300 652 330" fill="none" stroke="#666" stroke-opacity="0.35" stroke-width="0.7"/><path d="M620 273 Q640 300 657 335" fill="none" stroke="#666" stroke-opacity="0.35" stroke-width="0.7"/><path d="M605 290 Q620 305 633 318" fill="none" stroke="#666" stroke-opacity="0.35" stroke-width="0.7"/>
<path d="M603 298 C630 305 650 325 662 342 C650 360 645 380 648 420 C630 410 612 395 604 370 C598 350 598 320 603 298Z" fill="url(#lpp32)"/><path d="M606 305 Q606 350 628 398" fill="none" stroke="#555" stroke-opacity="0.35" stroke-width="0.7"/><path d="M612 308 Q614 355 634 402" fill="none" stroke="#555" stroke-opacity="0.35" stroke-width="0.7"/><path d="M620 312 Q622 358 640 405" fill="none" stroke="#555" stroke-opacity="0.35" stroke-width="0.7"/><path d="M628 317 Q630 360 645 408" fill="none" stroke="#555" stroke-opacity="0.35" stroke-width="0.7"/><path d="M637 323 Q636 350 640 340" fill="none" stroke="#555" stroke-opacity="0.35" stroke-width="0.7"/><path d="M603 320 Q600 360 618 390" fill="none" stroke="#555" stroke-opacity="0.35" stroke-width="0.7"/>
<path d="M637 335 C655 340 688 352 702 380 C708 400 700 415 690 423 C670 428 650 424 640 410 C630 395 627 372 629 352 C630 345 633 339 637 335Z" fill="url(#fpp32)"/><path d="M637 340 Q640 390 660 420" fill="none" stroke="#555" stroke-opacity="0.3" stroke-width="0.7"/><path d="M640 340 Q660 380 680 420" fill="none" stroke="#555" stroke-opacity="0.3" stroke-width="0.7"/><path d="M645 342 Q680 370 695 410" fill="none" stroke="#555" stroke-opacity="0.3" stroke-width="0.7"/><path d="M636 345 Q632 390 648 415" fill="none" stroke="#555" stroke-opacity="0.3" stroke-width="0.7"/></g>
</svg>
<div class="t" style="left:1437px;top:454px;font-style:italic;color:#000;transform:skewX(-14deg)">背景</div>
<svg style="position:absolute;left:1555px;top:453px;" width="12" height="14" viewBox="0 0 12 14"><path d="M3 6V4A3 3 0 0 1 9 4V6" fill="none" stroke="#2b2b2b" stroke-width="1.5"/><rect x="1" y="6" width="10" height="7.5" fill="#ddd" stroke="#2b2b2b"/><rect x="5" y="8.5" width="2" height="3" fill="#2b2b2b"/></svg>
<div style="left:1584px;top:441px;width:14px;height:399px;background:linear-gradient(90deg,#c4c4c4,#eeeeee 45%,#eeeeee 55%,#b9b9b9)"></div>
<div style="left:1359px;top:840px;width:239px;height:20px;background:#b9b9b9;border-top:1px solid #8a8a8a"></div>
<svg style="position:absolute;left:1395px;top:846px;" width="16" height="10" viewBox="0 0 16 10"><path d="M6 2H3.5A3 3 0 0 0 3.5 8H6M10 2H12.5A3 3 0 0 1 12.5 8H10M5 5H11" fill="none" stroke="#6a6a6a" stroke-width="1.6"/></svg>
<div class="t" style="left:1424px;top:843px;font-family:'Liberation Serif',serif;font-style:italic;font-size:14px;color:#777">fx</div>
<svg style="position:absolute;left:1449px;top:845px;" width="15" height="12" viewBox="0 0 15 12"><rect x="0.5" y="0.5" width="14" height="11" fill="#ddd" stroke="#2b2b2b"/><rect x="1" y="1" width="13" height="10" fill="#555"/><circle cx="7.5" cy="6" r="3" fill="#ddd"/></svg>
<svg style="position:absolute;left:1477px;top:845px;" width="14" height="14" viewBox="0 0 14 14"><circle cx="6" cy="6" r="5" fill="#ddd" stroke="#2b2b2b" stroke-width="1.3"/><path d="M9.5 2.5A5 5 0 0 1 2.5 9.5Z" fill="#2b2b2b"/><path d="M12 11h3l-1.5 2z" fill="#2b2b2b"/></svg>
<svg style="position:absolute;left:1503px;top:846px;" width="15" height="11" viewBox="0 0 15 11"><path d="M0.5 10.5V1.5H5L6.5 3H14.5V10.5Z" fill="#999" stroke="#2b2b2b"/></svg>
<svg style="position:absolute;left:1531px;top:845px;" width="13" height="12" viewBox="0 0 13 12"><path d="M0.5 0.5H12.5V11.5H4L0.5 8Z" fill="#ddd" stroke="#2b2b2b"/><path d="M0.5 8H4V11.5" fill="#999" stroke="#2b2b2b"/></svg>
<svg style="position:absolute;left:1557px;top:845px;" width="12" height="13" viewBox="0 0 12 13"><path d="M1 3H11M4 3V1H8V3M2 3L3 12H9L10 3" fill="#aaa" stroke="#777"/><path d="M4.5 5V10M6 5V10M7.5 5V10" stroke="#777"/></svg>
<div style="left:1479px;top:772px;width:118px;height:24px;background:#fff;border:1px solid #8aaee8"></div>
<div class="t" style="left:1488px;top:775px;font-size:17px;line-height:18px;font-weight:bold;color:#1a78e6">中</div>
<svg style="position:absolute;left:1510px;top:775px;" width="16" height="17" viewBox="0 0 16 17"><path d="M12 1.5A7.5 7.5 0 1 1 1.5 12A9 9 0 0 0 12 1.5Z" fill="#1a78e6"/></svg>
<svg style="position:absolute;left:1534px;top:774px;" width="16" height="18" viewBox="0 0 16 18"><circle cx="4" cy="4.5" r="2.2" fill="none" stroke="#1a78e6" stroke-width="1.6"/><path d="M10 8C13 8 13 13 9 16" fill="none" stroke="#1a78e6" stroke-width="2.4"/><circle cx="10.5" cy="9.5" r="2" fill="#1a78e6"/></svg>
<svg style="position:absolute;left:1552px;top:773px;" width="20" height="19" viewBox="0 0 20 19"><path d="M6 3L1 6L3 10L5 9V17H15V9L17 10L19 6L14 3C13 5 7 5 6 3Z" fill="#fff" stroke="#1a78e6" stroke-width="1.8"/><circle cx="16.5" cy="3.5" r="3" fill="#f04030"/></svg>
<svg style="position:absolute;left:1575px;top:774px;" width="19" height="19" viewBox="0 0 19 19"><path d="M15.49 7.91 L17.68 8.10 L17.68 10.90 L15.49 11.09 L14.86 12.61 L16.28 14.29 L14.29 16.28 L12.61 14.86 L11.09 15.49 L10.90 17.68 L8.10 17.68 L7.91 15.49 L6.39 14.86 L4.71 16.28 L2.72 14.29 L4.14 12.61 L3.51 11.09 L1.32 10.90 L1.32 8.10 L3.51 7.91 L4.14 6.39 L2.72 4.71 L4.71 2.72 L6.39 4.14 L7.91 3.51 L8.10 1.32 L10.90 1.32 L11.09 3.51 L12.61 4.14 L14.29 2.72 L16.28 4.71 L14.86 6.39Z" fill="none" stroke="#1a78e6" stroke-width="1.8" stroke-linejoin="round"/><circle cx="9.5" cy="9.5" r="2.6" fill="none" stroke="#1a78e6" stroke-width="1.8"/></svg>
<svg style="position:absolute;left:1452px;top:768px;" width="34" height="32" viewBox="0 0 34 32"><path d="M4 6L10 3L20 27L16 30Z" fill="#a0cc20" stroke="#5a8a20" stroke-width="0.8"/><path d="M3 5C3 2 8 0 10 3L4 6Z" fill="#f05a40"/><path d="M4 6L10 3L11 5L5 8Z" fill="#eee"/><path d="M16 30L20 27L19 31Z" fill="#d8a870"/><path d="M12 18C10 24 12 29 18 30C22 31 26 28 31 29C28 26 30 22 29 18Z" fill="#3ca8f0"/><path d="M10 21C8 21 7 23 9 25Z" fill="#3ca8f0"/><ellipse cx="20" cy="12" rx="9" ry="10.5" fill="#3ca8f0"/><ellipse cx="16.5" cy="13" rx="3" ry="3.6" fill="#fff"/><ellipse cx="23" cy="13.5" rx="3" ry="3.6" fill="#fff"/><circle cx="16.5" cy="13.5" r="1.8" fill="#123a70"/><circle cx="23" cy="14" r="1.8" fill="#123a70"/><path d="M14 8C15 7 17 7 18 8M21 8C22 7 24 7 25 8.5" fill="none" stroke="#1a70c0" stroke-width="0.9"/></svg>
<div style="left:150px;top:23px;width:248px;height:447px;background:#f0f0f0;border:1px solid #979797;box-shadow:2px 2px 3px rgba(0,0,0,0.55)"></div>
<div style="left:152px;top:26px;width:241px;height:21px;background:#3d99f6"></div>
<div class="t" style="left:171px;top:30px;color:#fff">模式(M)</div>
<svg style="position:absolute;left:384px;top:30px;" width="5" height="9" viewBox="0 0 5 9"><path d="M0 0L4.5 4.5L0 9Z" fill="#fff"/></svg>
<div style="left:153px;top:51px;width:240px;height:1px;background:#a8a8a8"></div>
<div style="left:153px;top:52px;width:240px;height:1px;background:#ffffff"></div>
<div class="t" style="left:171px;top:60px;color:#111">调整(J)</div>
<svg style="position:absolute;left:384px;top:60px;" width="5" height="9" viewBox="0 0 5 9"><path d="M0 0L4.5 4.5L0 9Z" fill="#111"/></svg>
<div style="left:153px;top:80px;width:240px;height:1px;background:#a8a8a8"></div>
<div style="left:153px;top:81px;width:240px;height:1px;background:#ffffff"></div>
<div class="t" style="left:171px;top:89px;color:#111">自动色调(N)</div>
<div class="t" style="left:250px;width:130px;text-align:right;top:89px;color:#111;letter-spacing:0.5px">Shift+Ctrl+L</div>
<div class="t" style="left:171px;top:110px;color:#111">自动对比度(U)</div>
<div class="t" style="left:250px;width:130px;text-align:right;top:110px;color:#111;letter-spacing:0.5px">Alt+Shift+Ctrl+L</div>
<div class="t" style="left:171px;top:131px;color:#8a8a8a">自动颜色(O)</div>
<div class="t" style="left:250px;width:130px;text-align:right;top:131px;color:#8a8a8a;letter-spacing:0.5px">Shift+Ctrl+B</div>
<div style="left:153px;top:152px;width:240px;height:1px;background:#a8a8a8"></div>
<div style="left:153px;top:153px;width:240px;height:1px;background:#ffffff"></div>
<div class="t" style="left:171px;top:161px;color:#111">图像大小(I)...</div>
<div class="t" style="left:250px;width:130px;text-align:right;top:161px;color:#111;letter-spacing:0.5px">Alt+Ctrl+I</div>
<div class="t" style="left:171px;top:182px;color:#111">画布大小(S)...</div>
<div class="t" style="left:250px;width:130px;text-align:right;top:182px;color:#111;letter-spacing:0.5px">Alt+Ctrl+C</div>
<div class="t" style="left:171px;top:204px;color:#111">图像旋转(G)</div>
<svg style="position:absolute;left:384px;top:204px;" width="5" height="9" viewBox="0 0 5 9"><path d="M0 0L4.5 4.5L0 9Z" fill="#111"/></svg>
<div class="t" style="left:171px;top:224px;color:#8a8a8a">裁剪(P)</div>
<div class="t" style="left:171px;top:245px;color:#111">裁切(R)...</div>
<div class="t" style="left:171px;top:266px;color:#8a8a8a">显示全部(V)</div>
<div style="left:153px;top:287px;width:240px;height:1px;background:#a8a8a8"></div>
<div style="left:153px;top:288px;width:240px;height:1px;background:#ffffff"></div>
<div class="t" style="left:171px;top:296px;color:#111">复制(D)...</div>
<div class="t" style="left:171px;top:317px;color:#111">应用图像(Y)...</div>
<div class="t" style="left:171px;top:338px;color:#111">计算(C)...</div>
<div style="left:153px;top:359px;width:240px;height:1px;background:#a8a8a8"></div>
<div style="left:153px;top:360px;width:240px;height:1px;background:#ffffff"></div>
<div class="t" style="left:171px;top:369px;color:#8a8a8a">变量(B)</div>
<svg style="position:absolute;left:384px;top:369px;" width="5" height="9" viewBox="0 0 5 9"><path d="M0 0L4.5 4.5L0 9Z" fill="#777"/></svg>
<div class="t" style="left:171px;top:389px;color:#8a8a8a">应用数据组(L)...</div>
<div style="left:153px;top:410px;width:240px;height:1px;background:#a8a8a8"></div>
<div style="left:153px;top:411px;width:240px;height:1px;background:#ffffff"></div>
<div class="t" style="left:171px;top:419px;color:#8a8a8a">陷印(T)...</div>
<div style="left:153px;top:440px;width:240px;height:1px;background:#a8a8a8"></div>
<div style="left:153px;top:441px;width:240px;height:1px;background:#ffffff"></div>
<div class="t" style="left:171px;top:450px;color:#111">分析(A)</div>
<svg style="position:absolute;left:384px;top:450px;" width="5" height="9" viewBox="0 0 5 9"><path d="M0 0L4.5 4.5L0 9Z" fill="#111"/></svg>
<div style="left:392px;top:23px;width:142px;height:276px;background:#f0f0f0;border:1px solid #979797;box-shadow:2px 2px 3px rgba(0,0,0,0.55)"></div>
<div style="left:395px;top:47px;width:136px;height:21px;background:#3d99f6"></div>
<div class="t" style="left:414px;top:29px;color:#111">位图(B)...</div>
<div class="t" style="left:414px;top:50px;color:#fff">灰度(G)</div>
<svg style="position:absolute;left:397px;top:52px;" width="10" height="9" viewBox="0 0 10 9"><path d="M1 4.5L3.8 7.5L9 1" fill="none" stroke="#fff" stroke-width="2"/></svg>
<div class="t" style="left:414px;top:71px;color:#111">双色调(D)...</div>
<div class="t" style="left:414px;top:92px;color:#111">索引颜色(I)</div>
<div class="t" style="left:414px;top:113px;color:#111">RGB 颜色(R)</div>
<div class="t" style="left:414px;top:134px;color:#111">CMYK 颜色(C)</div>
<div class="t" style="left:414px;top:155px;color:#111">Lab 颜色(L)</div>
<div class="t" style="left:414px;top:176px;color:#111">多通道(M)</div>
<div style="left:395px;top:197px;width:135px;height:1px;background:#a8a8a8"></div>
<div style="left:395px;top:198px;width:135px;height:1px;background:#ffffff"></div>
<div class="t" style="left:414px;top:206px;color:#111">8 位/通道(A)</div>
<svg style="position:absolute;left:397px;top:208px;" width="10" height="9" viewBox="0 0 10 9"><path d="M1 4.5L3.8 7.5L9 1" fill="none" stroke="#111" stroke-width="2"/></svg>
<div class="t" style="left:414px;top:227px;color:#111">16 位/通道(N)</div>
<div class="t" style="left:414px;top:248px;color:#111">32 位/通道(H)</div>
<div style="left:395px;top:269px;width:135px;height:1px;background:#a8a8a8"></div>
<div style="left:395px;top:270px;width:135px;height:1px;background:#ffffff"></div>
<div class="t" style="left:414px;top:278px;color:#8a8a8a">颜色表(T)...</div>
<div style="left:0px;top:859px;width:1600px;height:1px;background:#2a2a2a"></div>
<div style="left:0px;top:860px;width:1600px;height:5px;background:linear-gradient(90deg,#8ea5bd 0,#a9bdd2 40%,#a9bdd2 68%,#3c4852 72%,#56626c 85%,#3a4550 100%)"></div>
<svg style="position:absolute;left:16px;top:860px;" width="24" height="5" viewBox="0 0 24 5"><ellipse cx="12" cy="6" rx="10" ry="5" fill="none" stroke="#2a4a70" stroke-width="1.2"/></svg>
<div style="left:60px;top:861px;width:58px;height:4px;background:linear-gradient(#f4f6f8,#d0dae4);border:1px solid #5a6a7a;border-bottom:none;border-radius:2px 2px 0 0"></div>
<div style="left:122px;top:861px;width:58px;height:4px;background:linear-gradient(#f4f6f8,#d0dae4);border:1px solid #5a6a7a;border-bottom:none;border-radius:2px 2px 0 0"></div>
<div style="left:184px;top:861px;width:50px;height:4px;background:linear-gradient(#f4f6f8,#d0dae4);border:1px solid #5a6a7a;border-bottom:none;border-radius:2px 2px 0 0"></div>
<div style="left:309px;top:861px;width:57px;height:4px;background:linear-gradient(#f4f6f8,#d0dae4);border:1px solid #5a6a7a;border-bottom:none;border-radius:2px 2px 0 0"></div>
<div style="left:370px;top:861px;width:58px;height:4px;background:linear-gradient(#f4f6f8,#d0dae4);border:1px solid #5a6a7a;border-bottom:none;border-radius:2px 2px 0 0"></div>
<div style="left:432px;top:861px;width:51px;height:4px;background:linear-gradient(#f4f6f8,#d0dae4);border:1px solid #5a6a7a;border-bottom:none;border-radius:2px 2px 0 0"></div>
<div style="left:0px;top:860px;width:1600px;height:1px;background:rgba(190,210,230,0.6)"></div>
</body></html>
